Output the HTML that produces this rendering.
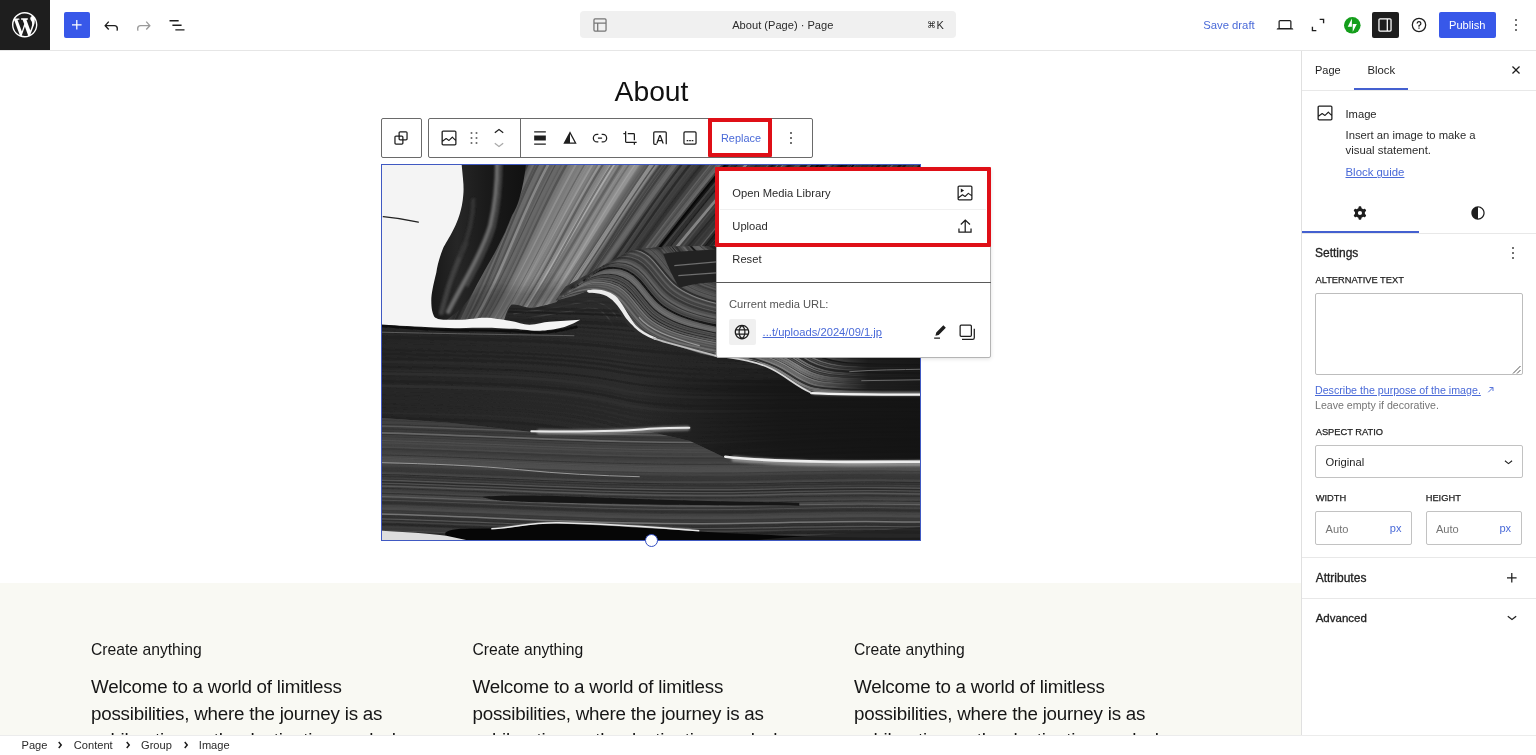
<!DOCTYPE html>
<html lang="en">
<head>
<meta charset="utf-8">
<title>About (Page) - Editor</title>
<style>
*{box-sizing:border-box;margin:0;padding:0}
html,body{width:1536px;height:755px;overflow:hidden;background:#fff;font-family:"Liberation Sans",sans-serif;color:#1e1e1e;font-size:13px}
svg{position:absolute;display:block;overflow:visible}
.ic{fill:#1e1e1e}
#header{position:absolute;left:0;top:0;width:1536px;height:51px;background:#fff;border-bottom:1px solid #e6e6e6}
#wplogo{position:absolute;left:0;top:0;width:50px;height:50px;background:#1e1e1e}
#addbtn{position:absolute;left:63.8px;top:11.7px;width:26.2px;height:26.7px;background:#3858e9;border-radius:2px}
#cmd{position:absolute;left:580.3px;top:11.4px;width:375.5px;height:27px;background:#f0f0f0;border-radius:4px}
#cmd .t{position:absolute;left:-0.3px;width:405.6px;top:0.6px;line-height:26.4px;text-align:center;font-size:11.1px;color:#2b2b2b;white-space:nowrap}
#cmd .k{position:absolute;left:347.2px;top:0.6px;line-height:26px;font-size:9.6px;color:#2b2b2b}
#savedraft{position:absolute;left:1203.2px;top:0;line-height:50px;font-size:11.3px;color:#4a6ad8;white-space:nowrap}
#publish{position:absolute;left:1438.5px;top:11.6px;width:57.4px;height:26.4px;background:#3858e9;border-radius:2px;color:#fff;font-size:11.1px;line-height:26px;text-align:center}
#sbtoggle{position:absolute;left:1372px;top:11.5px;width:26.5px;height:26.5px;background:#1e1e1e;border-radius:2px}
#canvas{position:absolute;left:0;top:0;width:1301px;height:735px;background:#fff;overflow:hidden}
#title{position:absolute;left:1px;width:1301px;top:73.2px;text-align:center;font-size:28.3px;line-height:36px;color:#111;white-space:nowrap}
#cream{position:absolute;left:0;top:583px;width:1301px;height:160px;background:#f9f9f3}
.col{position:absolute;top:0;width:340px;color:#161616}
.col .h{position:absolute;left:0;top:57px;font-size:15.7px;line-height:20px;white-space:nowrap}
.col .p{position:absolute;left:0;top:91.3px;font-size:18.8px;line-height:26.6px;white-space:nowrap;letter-spacing:-0.22px}
#footer{position:absolute;left:0;top:735px;width:1536px;height:20px;background:#fff;border-top:1px solid #ececec;font-size:11.1px;color:#2a2a2a}
#footer span{position:absolute;top:1.3px;line-height:16px;white-space:nowrap}
#sidebar{position:absolute;left:1301px;top:51px;width:235px;height:684px;background:#fff;border-left:1px solid #e0e0e0}
.sb{position:absolute;white-space:nowrap;line-height:16px}
.lbl{font-size:9.3px;letter-spacing:0;color:#222;-webkit-text-stroke:0.25px #222}
.hr{position:absolute;left:0;width:234px;height:1px;background:#e8e8e8}
.box{position:absolute;border:1px solid #bdbdbd;border-radius:2px;background:#fff}
.blue{color:#4a6ad8 !important}
#toolbar1{position:absolute;left:381.3px;top:117.5px;width:41px;height:40px;border:1px solid #6a6a6a;border-radius:2px;background:#fff}
#toolbar2{position:absolute;left:428px;top:117.5px;width:384.5px;height:40px;border:1px solid #6a6a6a;border-radius:2px;background:#fff}
#toolbar2 .div{position:absolute;left:90.5px;top:0;width:1px;height:38px;background:#6a6a6a}
#imgwrap{position:absolute;left:381.2px;top:163.8px;width:540.3px;height:377px;border:1.5px solid #4059c2;background:#262626;overflow:hidden}
#handle{position:absolute;left:644.6px;top:533.9px;width:13.5px;height:13.5px;border-radius:50%;background:#fff;border:1.8px solid #3550c4}
#popover{position:absolute;left:715.5px;top:168px;width:275.3px;height:190px;background:#fff;border:1px solid #b4b4b4;border-radius:2px;box-shadow:0 1px 4px rgba(0,0,0,.12)}
.mi{position:absolute;font-size:11.2px;line-height:16px;color:#2a2a2a;white-space:nowrap}
.red{position:absolute;border:4.5px solid #df0f17;border-radius:1px}
</style>
</head>
<body>
<div id="root" style="will-change:transform;position:absolute;left:0;top:0;width:1536px;height:755px;overflow:hidden">
<div id="canvas">
  <div id="title">About</div>
  <div id="toolbar1">
    <svg style="left:8.6px;top:9.3px" width="20" height="20" viewBox="0 0 24 24"><path class="ic" d="M18 4h-7c-1.100 0-2 .9-2 2v3H6c-1.100 0-2 .9-2 2v7c0 1.100.9 2 2 2h7c1.100 0 2-.9 2-2v-3h3c1.100 0 2-.9 2-2V6c0-1.100-.9-2-2-2zm-4.500 14c0 .3-.2.500-.5.500H6c-.3 0-.5-.2-.5-.5v-7c0-.3.200-.5.500-.5h3V13c0 1.100.9 2 2 2h2.500v3zm0-4.500H11c-.3 0-.5-.2-.5-.5v-2.500H13c.3 0 .5.200.5.500v2.500zm5-.5c0 .3-.2.500-.5.500h-3V11c0-1.100-.9-2-2-2h-2.500V6c0-.3.200-.5.500-.5h7c.3 0 .5.200.5.500v7z"/></svg>
  </div>
  <div id="toolbar2">
    <!-- image -->
    <svg style="left:9.6px;top:9.2px" width="20" height="20" viewBox="0 0 24 24"><path class="ic" d="M19 3H5c-1.100 0-2 .9-2 2v14c0 1.100.9 2 2 2h14c1.100 0 2-.9 2-2V5c0-1.100-.9-2-2-2zM5 4.500h14c.3 0 .5.200.5.500v8.400l-3-2.900c-.3-.3-.8-.3-1 0L11.900 14 9 12c-.3-.2-.6-.2-.8 0l-3.600 2.600V5c-.1-.3.100-.5.400-.5zm14 15H5c-.3 0-.5-.2-.5-.5v-2.400l4.100-3 3 1.900c.3.200.7.200.9-.1L16 12l3.500 3.400V19c0 .3-.2.500-.5.500z"/></svg>
    <!-- drag -->
    <svg style="left:34.8px;top:9.500px" width="20" height="20" viewBox="0 0 24 24"><path fill="#444" d="M8 7h2V5H8v2zm0 6h2v-2H8v2zm0 6h2v-2H8v2zm6-14v2h2V5h-2zm0 8h2v-2h-2v2zm0 6h2v-2h-2v2z"/></svg>
    <!-- movers -->
    <svg style="left:60px;top:3.2px" width="20" height="20" viewBox="0 0 24 24"><path class="ic" d="M6.500 12.400L12 8l5.500 4.400-.9 1.200L12 10l-4.500 3.600-1-1.200z"/></svg>
    <svg style="left:60px;top:15.1px" width="20" height="20" viewBox="0 0 24 24"><path fill="#a8a8a8" d="M17.500 11.600L12 16l-5.500-4.400.9-1.200L12 14l4.500-3.600 1 1.200z"/></svg>
    <div class="div"></div>
    <!-- align -->
    <svg style="left:100.6px;top:9.300px" width="20" height="20" viewBox="0 0 24 24"><path class="ic" d="M19 5.500H5V4h14v1.500ZM19 20H5v-1.500h14V20ZM5 9h14v6H5V9Z"/></svg>
    <!-- duotone -->
    <svg style="left:131.100px;top:9.100px" width="20" height="20" viewBox="0 0 24 24"><path class="ic" d="M12 4 4 19h16L12 4zm0 3.200 5.500 10.300H12V7.200z"/></svg>
    <!-- link -->
    <svg style="left:160.600px;top:9.500px" width="20" height="20" viewBox="0 0 24 24"><path class="ic" d="M10 17.389H8.444A5.194 5.194 0 1 1 8.444 7H10v1.500H8.444a3.694 3.694 0 0 0 0 7.389H10v1.500ZM14 7h1.556a5.194 5.194 0 0 1 0 10.390H14v-1.500h1.556a3.694 3.694 0 0 0 0-7.390H14V7Zm-4.500 6h5v-1.500h-5V13Z"/></svg>
    <!-- crop -->
    <svg style="left:191px;top:9.500px" width="20" height="20" viewBox="0 0 24 24"><path class="ic" d="M18 20v-2h2v-1.500H7.750a.25.25 0 0 1-.25-.250V4H6v2H4v1.500h2v8.750c0 .966.784 1.750 1.750 1.750h8.750v2H18ZM9.273 7.500h6.977a.25.25 0 0 1 .25.250v6.977H18V7.750A1.750 1.750 0 0 0 16.250 6H9.273v1.500Z"/></svg>
    <!-- overlay text -->
    <svg style="left:221px;top:9.300px" width="20" height="20" viewBox="0 0 24 24"><path fill="none" stroke="#1e1e1e" stroke-width="1.5" d="M8 19.500H5.800c-.8 0-1.300-.5-1.300-1.300V5.800c0-.8.500-1.300 1.300-1.300h12.400c.8 0 1.300.5 1.300 1.300v13.700"/><path class="ic" d="M11.100 8.500h1.800l3.700 10h-1.700l-.9-2.600h-4l-.9 2.600H7.400l3.700-10zm-.6 6h3l-1.500-4.300-1.500 4.300z"/></svg>
    <!-- caption -->
    <svg style="left:251px;top:9.300px" width="20" height="20" viewBox="0 0 24 24"><path class="ic" fill-rule="evenodd" d="M6 5.500h12a.5.5 0 0 1 .5.500v12a.5.5 0 0 1-.5.500H6a.5.5 0 0 1-.5-.5V6a.5.5 0 0 1 .5-.5ZM4 6a2 2 0 0 1 2-2h12a2 2 0 0 1 2 2v12a2 2 0 0 1-2 2H6a2 2 0 0 1-2-2V6Zm4 10h2v-1.500H8V16Zm5 0h-2v-1.500h2V16Zm1 0h2v-1.500h-2V16Z"/></svg>
    <div class="blue" style="position:absolute;left:292px;top:11.5px;font-size:10.9px;line-height:16px;white-space:nowrap" id="replace">Replace</div>
    <!-- dots -->
    <svg style="left:352.400px;top:9.500px" width="20" height="20" viewBox="0 0 24 24"><path class="ic" d="M13 19h-2v-2h2v2zm0-6h-2v-2h2v2zm0-6h-2V5h2v2z"/></svg>
  </div>
  <div class="red" style="left:707.8px;top:118px;width:64.1px;height:38.5px"></div>
  <div id="imgwrap">
<svg style="left:0;top:0" width="537.3" height="374.0" viewBox="382.7 165.3 537.3 374.0" preserveAspectRatio="none">
<defs><linearGradient id="gA" gradientUnits="userSpaceOnUse" x1="380" y1="0" x2="925" y2="0"><stop offset="0" stop-color="#242424"/><stop offset=".45" stop-color="#2c2c2c"/><stop offset=".7" stop-color="#1e1e1e"/><stop offset="1" stop-color="#131313"/></linearGradient><linearGradient id="gB" x1="0" y1="0" x2="0" y2="1"><stop offset="0" stop-color="#3a3a3a"/><stop offset=".3" stop-color="#454545"/><stop offset=".7" stop-color="#3c3c3c"/><stop offset="1" stop-color="#2c2c2c"/></linearGradient><linearGradient id="gT" x1="0" y1="0" x2="1" y2="0"><stop offset="0" stop-color="#161616"/><stop offset=".3" stop-color="#262626"/><stop offset=".6" stop-color="#1a1a1a"/><stop offset="1" stop-color="#111"/></linearGradient><filter id="b1" x="-5%" y="-5%" width="110%" height="110%"><feGaussianBlur stdDeviation="0.6"/></filter><filter id="b15" x="-5%" y="-5%" width="110%" height="110%"><feGaussianBlur stdDeviation="0.9"/></filter><filter id="b5" x="-20%" y="-20%" width="140%" height="140%"><feGaussianBlur stdDeviation="6"/></filter><filter id="b04" x="-5%" y="-5%" width="110%" height="110%"><feGaussianBlur stdDeviation="0.4"/></filter><filter id="b2" x="-5%" y="-5%" width="110%" height="110%"><feGaussianBlur stdDeviation="1.2"/></filter><clipPath id="cS"><path d="M462 160H925V246H720L665 247 633 250 600 268 566 289 556 304 530 309 512 307 506 322 480 320 452 323 436 322Z"/></clipPath><clipPath id="cA"><path d="M380 326 504 330 510 308 534 309 575 298 604 297 614 304 628 325 640 336 652 340 702 356 756 363 792 383 810 394 925 396 925 460 813 462 726 458 690 441 650 432 530 432 450 423 380 418Z"/></clipPath><clipPath id="cB"><path d="M380 418 450 423 530 432 650 432 690 441 726 458 813 462 925 460V545H380Z"/></clipPath><linearGradient id="gR2" x1="0" y1="0" x2="1" y2="0"><stop offset="0" stop-color="#151515" stop-opacity="0"/><stop offset=".5" stop-color="#151515" stop-opacity=".85"/><stop offset="1" stop-color="#131313" stop-opacity=".95"/></linearGradient><clipPath id="cR"><path d="M715 352H925V395L812 393.500 792 381 772 369 756 361 715 356Z"/></clipPath><linearGradient id="gR" x1="0" y1="0" x2="1" y2="0"><stop offset="0" stop-color="#161616" stop-opacity="0"/><stop offset=".55" stop-color="#161616" stop-opacity=".9"/><stop offset="1" stop-color="#141414" stop-opacity=".95"/></linearGradient><clipPath id="cW"><path d="M566 287 600 268 633 250 665 247 720 246V358L702 354 652 338 634 326 622 306 607 293 589 291 575 296 556 301Z"/></clipPath></defs>
<rect x="380" y="160" width="545" height="385" fill="url(#gA)"/>
<rect x="380" y="400" width="545" height="130" fill="url(#gB)"/>
<path fill="url(#gA)" d="M380 326 580 331 612 345 642 372 682 392 760 396 925 396 925 460 813 462 726 458 690 441 650 432 530 432 450 423 380 418Z"/>
<g clip-path="url(#cS)"><rect x="440" y="160" width="490" height="240" fill="#606060"/>
<g filter="url(#b2)" fill="none" stroke-linecap="butt">
<path stroke="#414141" stroke-width="11.5" d="M521.9 160C493.8 217.8 478.7 275.5 446.6 335"/>
<path stroke="#303030" stroke-width="12.8" d="M529.2 160C500.4 217.8 483.9 275.5 451.3 335"/>
<path stroke="#6b6b6b" stroke-width="8.3" d="M537.1 160C508.3 217.8 488.4 275.5 456.6 335"/>
<path stroke="#6a6a6a" stroke-width="11.7" d="M547.9 160C515.6 217.8 502.7 275.5 464.7 335"/>
<path stroke="#595959" stroke-width="9.5" d="M553.5 160C524.2 217.8 499.1 275.5 467.8 335"/>
<path stroke="#686868" stroke-width="13.1" d="M561.3 160C529.3 217.8 508.7 275.5 472.9 335"/>
<path stroke="#525252" stroke-width="9.7" d="M570.9 160C537.3 217.8 518 275.5 479.9 335"/>
<path stroke="#7c7c7c" stroke-width="12.2" d="M580.5 160C544.6 217.8 528.6 275.5 486.9 335"/>
<path stroke="#808080" stroke-width="10.4" d="M586.5 160C552.9 217.8 526.9 275.5 490.3 335"/>
<path stroke="#8d8d8d" stroke-width="13.1" d="M596.3 160C561.1 217.8 536.1 275.5 497.4 335"/>
<path stroke="#9d9d9d" stroke-width="10.4" d="M601.9 160C566.6 217.8 538.6 275.5 500.4 335"/>
<path stroke="#7e7e7e" stroke-width="9.6" d="M610.2 160C572.4 217.8 548.6 275.5 506.2 335"/>
<path stroke="#aaaaaa" stroke-width="9.5" d="M618.4 160C580.9 217.8 552.7 275.5 511.7 335"/>
<path stroke="#777777" stroke-width="9.1" d="M626.6 160C589.3 217.8 556.9 275.5 517.3 335"/>
<path stroke="#868686" stroke-width="11.9" d="M636.1 160C596.4 217.8 567.8 275.5 524.2 335"/>
<path stroke="#939393" stroke-width="9.6" d="M642.9 160C602.4 217.8 572.7 275.5 528.4 335"/>
<path stroke="#5b5b5b" stroke-width="10.4" d="M653.6 160C610.7 217.8 584.7 275.5 536.4 335"/>
<path stroke="#8d8d8d" stroke-width="13.9" d="M661.4 160C618.3 217.8 589.5 275.5 541.6 335"/>
<path stroke="#5d5d5d" stroke-width="8.4" d="M667.6 160C625.2 217.8 590.9 275.5 545.2 335"/>
<path stroke="#414141" stroke-width="11.6" d="M675.4 160C630.8 217.8 599.5 275.5 550.3 335"/>
<path stroke="#686868" stroke-width="13.2" d="M684.4 160C639.4 217.8 605.7 275.5 556.7 335"/>
<path stroke="#444444" stroke-width="12.9" d="M691.9 160C647.3 217.8 609.2 275.5 561.7 335"/>
<path stroke="#424242" stroke-width="13.7" d="M700.3 160C654.7 217.8 616.1 275.5 567.4 335"/>
<path stroke="#0f0f0f" stroke-width="8.6" d="M710.3 160C662.2 217.8 627.7 275.5 574.8 335"/>
<path stroke="#444444" stroke-width="12.9" d="M715.9 160C665.5 217.8 634.4 275.5 577.8 335"/>
<path stroke="#626262" stroke-width="12.3" d="M725.7 160C677.1 217.8 637.2 275.5 585 335"/>
<path stroke="#161616" stroke-width="9.7" d="M732.3 160C683 217.8 641.5 275.5 588.9 335"/>
<path stroke="#2d2d2d" stroke-width="9.6" d="M743 160C693 217.8 650.2 275.5 597 335"/>
<path stroke="#454545" stroke-width="8.8" d="M749.7 160C699.4 217.8 654.1 275.5 601.1 335"/>
<path stroke="#4d4d4d" stroke-width="11.9" d="M757.6 160C703.9 217.8 668.5 275.5 608.8 335"/>
<path stroke="#3c3c3c" stroke-width="13.5" d="M766.7 160C714.3 217.8 675.2 275.5 617.9 335"/>
<path stroke="#3c3c3c" stroke-width="11.8" d="M774.9 160C720.9 217.8 686.4 275.5 626.1 335"/>
<path stroke="#141414" stroke-width="11.3" d="M782.3 160C729.3 217.8 692 275.5 633.6 335"/>
<path stroke="#838383" stroke-width="12.2" d="M791.2 160C737.6 217.8 702.3 275.5 642.5 335"/>
<path stroke="#222222" stroke-width="13.2" d="M799.5 160C745.8 217.8 710.7 275.5 650.8 335"/>
<path stroke="#515151" stroke-width="11.4" d="M806.6 160C753.3 217.8 716.7 275.5 657.8 335"/>
<path stroke="#1b1b1b" stroke-width="11.8" d="M815.3 160C763.7 217.8 722.2 275.5 666.6 335"/>
<path stroke="#262626" stroke-width="10.3" d="M824.6 160C771 217.8 735.4 275.5 675.8 335"/>
<path stroke="#0d0d0d" stroke-width="12.5" d="M831.9 160C779.5 217.8 740.4 275.5 683.2 335"/>
<path stroke="#444444" stroke-width="9.4" d="M837.9 160C785.4 217.8 746.6 275.5 689.2 335"/>
<path stroke="#0f0f0f" stroke-width="8.1" d="M848.1 160C796 217.8 755.9 275.5 699.3 335"/>
<path stroke="#131313" stroke-width="9" d="M855 160C802.2 217.8 764.3 275.5 706.3 335"/>
<path stroke="#080808" stroke-width="12" d="M865 160C812.3 217.8 774.1 275.5 716.2 335"/>
<path stroke="#434343" stroke-width="13.5" d="M871 160C819.2 217.8 778.3 275.5 722.2 335"/>
<path stroke="#222222" stroke-width="11" d="M881.2 160C829.6 217.8 788.1 275.5 732.4 335"/>
<path stroke="#282828" stroke-width="13.7" d="M889.2 160C835.7 217.8 799.8 275.5 740.4 335"/>
<path stroke="#212121" stroke-width="10.5" d="M895.6 160C844.9 217.8 800.8 275.5 746.9 335"/>
<path stroke="#363636" stroke-width="13" d="M904.8 160C852.8 217.8 812.6 275.5 756.1 335"/>
<path stroke="#363636" stroke-width="8.2" d="M914 160C862.1 217.8 821.5 275.5 765.3 335"/>
<path stroke="#333333" stroke-width="12.7" d="M921.4 160C869 217.8 829.7 275.5 772.6 335"/>
<path stroke="#2b2b2b" stroke-width="9.4" d="M927.4 160C876.8 217.8 832.3 275.5 778.7 335"/>
<path stroke="#313131" stroke-width="10.7" d="M935.9 160C885.6 217.8 840.1 275.5 787.2 335"/>
</g>
<g filter="url(#b1)" fill="none" stroke-linecap="butt" opacity="0.6">
<path stroke="#434343" stroke-width="1.4" d="M522.4 160C493.9 217.8 480 275.5 447.1 335"/>
<path stroke="#272727" stroke-width="1.9" d="M525.7 160C498.8 217.8 478.7 275.5 449.3 335"/>
<path stroke="#373737" stroke-width="2" d="M530.3 160C502.9 217.8 482.4 275.5 452.6 335"/>
<path stroke="#595959" stroke-width="2.6" d="M533.8 160C503.7 217.8 489.7 275.5 454.8 335"/>
<path stroke="#454545" stroke-width="1.9" d="M538.4 160C510.6 217.8 488.2 275.5 458.3 335"/>
<path stroke="#3c3c3c" stroke-width="2.1" d="M541.4 160C509.9 217.8 497 275.5 460 335"/>
<path stroke="#6e6e6e" stroke-width="1.4" d="M546 160C514.5 217.8 499.8 275.5 463.4 335"/>
<path stroke="#4e4e4e" stroke-width="2.4" d="M549.3 160C517.4 217.8 502.5 275.5 465.5 335"/>
<path stroke="#a5a5a5" stroke-width="2.6" d="M551.6 160C518.9 217.8 504.7 275.5 466.5 335"/>
<path stroke="#5a5a5a" stroke-width="1.7" d="M555.7 160C522.6 217.8 508.1 275.5 469.4 335"/>
<path stroke="#3d3d3d" stroke-width="1.1" d="M558.8 160C527.2 217.8 506.6 275.5 471.3 335"/>
<path stroke="#5d5d5d" stroke-width="1.3" d="M564.8 160C534.3 217.8 508.8 275.5 476.1 335"/>
<path stroke="#797979" stroke-width="2.4" d="M567.2 160C533.4 217.8 516.1 275.5 477.2 335"/>
<path stroke="#7f7f7f" stroke-width="2" d="M572.5 160C538.7 217.8 519.8 275.5 481.3 335"/>
<path stroke="#7d7d7d" stroke-width="2.5" d="M576.7 160C544.8 217.8 518.3 275.5 484.2 335"/>
<path stroke="#9b9b9b" stroke-width="2.1" d="M579.5 160C545.5 217.8 523.9 275.5 485.9 335"/>
<path stroke="#787878" stroke-width="2.7" d="M582.4 160C548.5 217.8 524.8 275.5 487.5 335"/>
<path stroke="#545454" stroke-width="1.4" d="M588.1 160C553.3 217.8 530.9 275.5 492 335"/>
<path stroke="#7f7f7f" stroke-width="2" d="M590.6 160C555.5 217.8 532.4 275.5 493.3 335"/>
<path stroke="#818181" stroke-width="2" d="M594 160C557.3 217.8 537.4 275.5 495.5 335"/>
<path stroke="#6c6c6c" stroke-width="2.8" d="M598.7 160C564.5 217.8 535.4 275.5 498.9 335"/>
<path stroke="#595959" stroke-width="1.9" d="M601.3 160C565 217.8 540.4 275.5 500.3 335"/>
<path stroke="#4a4a4a" stroke-width="2.2" d="M606.7 160C568.4 217.8 548.4 275.5 504.5 335"/>
<path stroke="#8e8e8e" stroke-width="1" d="M610.8 160C575.2 217.8 545.6 275.5 507.4 335"/>
<path stroke="#838383" stroke-width="2.2" d="M612.5 160C576 217.8 547.2 275.5 507.8 335"/>
<path stroke="#4b4b4b" stroke-width="2" d="M616 160C577.1 217.8 554 275.5 510.1 335"/>
<path stroke="#6a6a6a" stroke-width="1.8" d="M620.2 160C583.1 217.8 553.1 275.5 513.1 335"/>
<path stroke="#555555" stroke-width="2.3" d="M624.9 160C587.5 217.8 556.7 275.5 516.5 335"/>
<path stroke="#949494" stroke-width="1.5" d="M629 160C589.7 217.8 562.9 275.5 519.4 335"/>
<path stroke="#5f5f5f" stroke-width="1.6" d="M633.1 160C592.3 217.8 568.5 275.5 522.3 335"/>
<path stroke="#8b8b8b" stroke-width="1.3" d="M635.7 160C594 217.8 571.1 275.5 523.6 335"/>
<path stroke="#a9a9a9" stroke-width="1.2" d="M639.2 160C598 217.8 572.3 275.5 526 335"/>
<path stroke="#757575" stroke-width="2.4" d="M644.8 160C604.4 217.8 574.6 275.5 530.3 335"/>
<path stroke="#616161" stroke-width="2.8" d="M646.2 160C606.2 217.8 573.4 275.5 530.5 335"/>
<path stroke="#3f3f3f" stroke-width="2.4" d="M652.9 160C612.8 217.8 578.6 275.5 535.9 335"/>
<path stroke="#979797" stroke-width="1.1" d="M654.3 160C614 217.8 578.9 275.5 536.2 335"/>
<path stroke="#2e2e2e" stroke-width="1.4" d="M659.2 160C616.8 217.8 586.5 275.5 539.8 335"/>
<path stroke="#5a5a5a" stroke-width="1.2" d="M663.9 160C619.1 217.8 594.2 275.5 543.3 335"/>
<path stroke="#313131" stroke-width="1.9" d="M665.4 160C620.4 217.8 594.6 275.5 543.5 335"/>
<path stroke="#636363" stroke-width="1" d="M670.5 160C627.2 217.8 594.7 275.5 547.5 335"/>
<path stroke="#626262" stroke-width="1.8" d="M674.9 160C629.5 217.8 601.6 275.5 550.6 335"/>
<path stroke="#6d6d6d" stroke-width="1" d="M677.2 160C634.1 217.8 597.7 275.5 551.7 335"/>
<path stroke="#434343" stroke-width="1.8" d="M683.1 160C637.1 217.8 607.9 275.5 556.3 335"/>
<path stroke="#1d1d1d" stroke-width="2.6" d="M686 160C640.8 217.8 607.6 275.5 558 335"/>
<path stroke="#4b4b4b" stroke-width="1.8" d="M688.8 160C641.5 217.8 612.8 275.5 559.6 335"/>
<path stroke="#1d1d1d" stroke-width="2.5" d="M694.5 160C647 217.8 617.5 275.5 564.1 335"/>
<path stroke="#464646" stroke-width="1.9" d="M697.9 160C651.9 217.8 616.3 275.5 566.3 335"/>
<path stroke="#3c3c3c" stroke-width="2.2" d="M699.5 160C653.2 217.8 616.6 275.5 566.6 335"/>
<path stroke="#383838" stroke-width="2.1" d="M703.9 160C654.9 217.8 625 275.5 569.8 335"/>
<path stroke="#2e2e2e" stroke-width="2.3" d="M708.7 160C661.4 217.8 624.5 275.5 573.3 335"/>
<path stroke="#484848" stroke-width="2.5" d="M713 160C663.9 217.8 630.9 275.5 576.4 335"/>
<path stroke="#737373" stroke-width="1.4" d="M715.4 160C667.4 217.8 629.7 275.5 577.7 335"/>
<path stroke="#404040" stroke-width="2" d="M719.6 160C672.3 217.8 630.7 275.5 580.6 335"/>
<path stroke="#797979" stroke-width="2.3" d="M725.2 160C675.6 217.8 639.2 275.5 585 335"/>
<path stroke="#4d4d4d" stroke-width="2.9" d="M728.5 160C680.5 217.8 637.8 275.5 587.1 335"/>
<path stroke="#000000" stroke-width="2" d="M730.4 160C680.4 217.8 642 275.5 587.7 335"/>
<path stroke="#585858" stroke-width="2.2" d="M735.5 160C686.8 217.8 643 275.5 591.6 335"/>
<path stroke="#343434" stroke-width="2.1" d="M738.6 160C688.6 217.8 647.1 275.5 593.5 335"/>
<path stroke="#131313" stroke-width="1.1" d="M742.2 160C690 217.8 653.3 275.5 595.8 335"/>
<path stroke="#404040" stroke-width="2.8" d="M745.6 160C692.9 217.8 656.2 275.5 598 335"/>
<path stroke="#acacac" stroke-width="2.8" d="M751.2 160C700.9 217.8 655.4 275.5 602.4 335"/>
<path stroke="#363636" stroke-width="1.5" d="M754 160C702 217.8 661.7 275.5 605.3 335"/>
<path stroke="#353535" stroke-width="2.6" d="M758.1 160C704.3 217.8 669.4 275.5 609.4 335"/>
<path stroke="#1c1c1c" stroke-width="1.9" d="M762.2 160C711.6 217.8 666.9 275.5 613.4 335"/>
<path stroke="#2b2b2b" stroke-width="2.3" d="M764.8 160C714.5 217.8 669 275.5 616 335"/>
<path stroke="#353535" stroke-width="1.8" d="M769.3 160C718.2 217.8 675.3 275.5 620.6 335"/>
<path stroke="#787878" stroke-width="1.5" d="M774.1 160C721.9 217.8 682.2 275.5 625.4 335"/>
<path stroke="#363636" stroke-width="2.2" d="M775.9 160C722.3 217.8 686.9 275.5 627.2 335"/>
<path stroke="#2a2a2a" stroke-width="2.3" d="M780.5 160C729.3 217.8 686.5 275.5 631.7 335"/>
<path stroke="#000000" stroke-width="3" d="M785.5 160C734.6 217.8 690.8 275.5 636.7 335"/>
<path stroke="#404040" stroke-width="1.9" d="M789.8 160C736.2 217.8 700.6 275.5 641 335"/>
<path stroke="#393939" stroke-width="1.1" d="M792.7 160C742.2 217.8 697.3 275.5 643.9 335"/>
<path stroke="#131313" stroke-width="2" d="M794.9 160C742.1 217.8 704.1 275.5 646.1 335"/>
<path stroke="#2b2b2b" stroke-width="2.7" d="M799.1 160C747.6 217.8 705.6 275.5 650.3 335"/>
<path stroke="#434343" stroke-width="1.4" d="M802.5 160C751.9 217.8 707.2 275.5 653.7 335"/>
<path stroke="#141414" stroke-width="1.7" d="M807.3 160C756.2 217.8 713.2 275.5 658.6 335"/>
<path stroke="#272727" stroke-width="2.8" d="M811.8 160C757.8 217.8 723.6 275.5 663.1 335"/>
<path stroke="#858585" stroke-width="2.8" d="M814.9 160C763.4 217.8 721.7 275.5 666.2 335"/>
<path stroke="#1a1a1a" stroke-width="1.6" d="M817.7 160C767.3 217.8 722.2 275.5 669 335"/>
<path stroke="#010101" stroke-width="2.3" d="M823.6 160C773.2 217.8 728 275.5 674.9 335"/>
<path stroke="#2f2f2f" stroke-width="1.3" d="M825.3 160C774 217.8 731.6 275.5 676.6 335"/>
<path stroke="#0d0d0d" stroke-width="1.2" d="M830 160C777 217.8 739.6 275.5 681.2 335"/>
<path stroke="#6a6a6a" stroke-width="1.9" d="M834.8 160C782.5 217.8 743.2 275.5 686.1 335"/>
<path stroke="#161616" stroke-width="1.8" d="M838.9 160C787.6 217.8 745.2 275.5 690.2 335"/>
<path stroke="#343434" stroke-width="1.7" d="M843.1 160C789.5 217.8 754.1 275.5 694.4 335"/>
<path stroke="#252525" stroke-width="2.1" d="M845.3 160C793.7 217.8 752.2 275.5 696.6 335"/>
<path stroke="#1d1d1d" stroke-width="2.5" d="M850.3 160C798.1 217.8 758.5 275.5 701.6 335"/>
<path stroke="#494949" stroke-width="2" d="M854.4 160C803.2 217.8 760.5 275.5 705.6 335"/>
<path stroke="#585858" stroke-width="1.1" d="M857.2 160C804.8 217.8 765.5 275.5 708.4 335"/>
<path stroke="#5d5d5d" stroke-width="1.2" d="M861 160C807.8 217.8 771.1 275.5 712.2 335"/>
<path stroke="#2b2b2b" stroke-width="2.5" d="M865.4 160C811.7 217.8 776.4 275.5 716.6 335"/>
<path stroke="#1e1e1e" stroke-width="2.5" d="M868.9 160C817.8 217.8 774.7 275.5 720.2 335"/>
<path stroke="#202020" stroke-width="2.3" d="M872.3 160C819.2 217.8 782.3 275.5 723.6 335"/>
<path stroke="#414141" stroke-width="2.4" d="M876.1 160C823.8 217.8 784.2 275.5 727.3 335"/>
<path stroke="#444444" stroke-width="2.6" d="M881.1 160C829.4 217.8 788.2 275.5 732.4 335"/>
<path stroke="#101010" stroke-width="2.3" d="M884.7 160C831.1 217.8 795.6 275.5 735.9 335"/>
<path stroke="#3b3b3b" stroke-width="1.3" d="M887.6 160C834.6 217.8 797.1 275.5 738.8 335"/>
<path stroke="#181818" stroke-width="1.3" d="M892 160C838 217.8 803.8 275.5 743.3 335"/>
<path stroke="#525252" stroke-width="1.6" d="M894.2 160C842.4 217.8 801.5 275.5 745.5 335"/>
<path stroke="#747474" stroke-width="1.4" d="M897.8 160C845.1 217.8 806.8 275.5 749 335"/>
<path stroke="#323232" stroke-width="1.2" d="M901.4 160C849.5 217.8 808.9 275.5 752.7 335"/>
<path stroke="#000000" stroke-width="2.4" d="M905.6 160C854.6 217.8 811.2 275.5 756.8 335"/>
<path stroke="#111111" stroke-width="2.5" d="M910.6 160C859.6 217.8 816.2 275.5 761.9 335"/>
<path stroke="#444444" stroke-width="2" d="M913.6 160C861.3 217.8 821.8 275.5 764.8 335"/>
<path stroke="#454545" stroke-width="2.9" d="M917.2 160C863.6 217.8 828.2 275.5 768.5 335"/>
<path stroke="#565656" stroke-width="2.9" d="M921.7 160C870.7 217.8 827.3 275.5 773 335"/>
<path stroke="#111111" stroke-width="3" d="M926.5 160C874.9 217.8 833.4 275.5 777.7 335"/>
<path stroke="#5c5c5c" stroke-width="1.9" d="M929.9 160C878.8 217.8 835.6 275.5 781.1 335"/>
<path stroke="#000000" stroke-width="1.3" d="M932.8 160C879.5 217.8 843 275.5 784.1 335"/>
<path stroke="#0d0d0d" stroke-width="2" d="M936.5 160C885.3 217.8 842.4 275.5 787.7 335"/>
</g>
<path fill="#1a1a1a" opacity=".28" filter="url(#b5)" d="M440 325 462 296 490 286 530 290 560 282 566 289 556 305 520 310 506 324Z"/>
</g>
<g clip-path="url(#cW)"><rect x="540" y="200" width="200" height="170" fill="#3c3c3c"/>
<g filter="url(#b15)" fill="none">
<path stroke="#636363" stroke-width="6.6" d="M560.1 298.9C585.1 287.9 608.1 289.9 622.1 305.9 S638.1 329.9 660.1 339.9 S715.1 352.9 770.1 365.9"/>
<path stroke="#585858" stroke-width="7.3" d="M563.7 296.2C587.9 284 610.9 286 624.9 302 S640.9 326 662.9 336 S717.9 349 772.9 362"/>
<path stroke="#616161" stroke-width="7.5" d="M567.7 293.3C590.9 279.9 613.9 281.9 627.9 297.9 S643.9 321.9 665.9 331.9 S720.9 344.9 775.9 357.9"/>
<path stroke="#1e1e1e" stroke-width="5.8" d="M571.8 290.3C594 275.6 617 277.6 631 293.6 S647 317.6 669 327.6 S724 340.6 779 353.6"/>
<path stroke="#5f5f5f" stroke-width="6.4" d="M576.3 287C597.5 270.8 620.5 272.8 634.5 288.8 S650.5 312.8 672.5 322.8 S727.5 335.8 782.5 348.8"/>
<path stroke="#747474" stroke-width="6.8" d="M580.5 283.9C600.8 266.4 623.8 268.4 637.8 284.4 S653.8 308.4 675.8 318.4 S730.8 331.4 785.8 344.4"/>
<path stroke="#4a4a4a" stroke-width="6.3" d="M584.5 280.9C603.8 262.2 626.8 264.2 640.8 280.2 S656.8 304.2 678.8 314.2 S733.8 327.2 788.8 340.2"/>
<path stroke="#646464" stroke-width="5.3" d="M588.5 277.9C607 257.9 630 259.9 644 275.9 S660 299.9 682 309.9 S737 322.9 792 335.9"/>
<path stroke="#525252" stroke-width="6.6" d="M592.5 275C610 253.7 633 255.7 647 271.7 S663 295.7 685 305.7 S740 318.7 795 331.7"/>
<path stroke="#3a3a3a" stroke-width="7.5" d="M596 272.4C612.7 250 635.7 252 649.7 268 S665.7 292 687.7 302 S742.7 315 797.7 328"/>
<path stroke="#4a4a4a" stroke-width="5.9" d="M600.1 269.4C615.9 245.7 638.9 247.7 652.9 263.7 S668.9 287.7 690.9 297.7 S745.9 310.7 800.9 323.7"/>
<path stroke="#4f4f4f" stroke-width="7.1" d="M604.3 266.3C619.1 241.3 642.1 243.3 656.1 259.3 S672.1 283.3 694.1 293.3 S749.1 306.3 804.1 319.3"/>
<path stroke="#616161" stroke-width="6.2" d="M608.2 263.4C622.1 237.1 645.1 239.1 659.1 255.1 S675.1 279.1 697.1 289.1 S752.1 302.1 807.1 315.1"/>
<path stroke="#424242" stroke-width="7.9" d="M612.4 260.3C625.3 232.8 648.3 234.8 662.3 250.8 S678.3 274.8 700.3 284.8 S755.3 297.8 810.3 310.8"/>
<path stroke="#454545" stroke-width="6.1" d="M616.7 257.2C628.6 228.2 651.6 230.2 665.6 246.2 S681.6 270.2 703.6 280.2 S758.6 293.2 813.6 306.2"/>
<path stroke="#212121" stroke-width="5.7" d="M620.6 254.3C631.6 224.1 654.6 226.1 668.6 242.1 S684.6 266.1 706.6 276.1 S761.6 289.1 816.6 302.1"/>
<path stroke="#414141" stroke-width="8" d="M624.5 251.4C634.6 219.9 657.6 221.9 671.6 237.9 S687.6 261.9 709.6 271.9 S764.6 284.9 819.6 297.9"/>
<path stroke="#424242" stroke-width="5.6" d="M628.8 248.2C637.9 215.5 660.9 217.5 674.9 233.5 S690.9 257.5 712.9 267.5 S767.9 280.5 822.9 293.5"/>
<path stroke="#3d3d3d" stroke-width="6.6" d="M632.6 245.4C640.9 211.4 663.9 213.4 677.9 229.4 S693.9 253.4 715.9 263.4 S770.9 276.4 825.9 289.4"/>
<path stroke="#646464" stroke-width="6" d="M636.4 242.6C643.8 207.4 666.8 209.4 680.8 225.4 S696.8 249.4 718.8 259.4 S773.8 272.4 828.8 285.4"/>
<path stroke="#393939" stroke-width="5.6" d="M640.5 239.6C646.9 203.1 669.9 205.1 683.9 221.1 S699.9 245.1 721.9 255.1 S776.9 268.1 831.9 281.1"/>
<path stroke="#121212" stroke-width="6" d="M644.8 236.4C650.2 198.6 673.2 200.6 687.2 216.6 S703.2 240.6 725.2 250.6 S780.2 263.6 835.2 276.6"/>
</g>
<g filter="url(#b04)" fill="none" opacity="0.8">
<path stroke="#393939" stroke-width="1.3" d="M560.4 298.7C585.3 287.6 608.3 289.6 622.3 305.6 S638.3 329.6 660.3 339.6 S715.3 352.6 770.3 365.6"/>
<path stroke="#4b4b4b" stroke-width="0.9" d="M561.9 297.6C586.4 286 609.4 288 623.4 304 S639.4 328 661.4 338 S716.4 351 771.4 364"/>
<path stroke="#747474" stroke-width="1.8" d="M562.9 296.8C587.3 284.9 610.3 286.9 624.3 302.9 S640.3 326.9 662.3 336.9 S717.3 349.9 772.3 362.9"/>
<path stroke="#484848" stroke-width="1.4" d="M564.6 295.6C588.5 283.2 611.5 285.2 625.5 301.2 S641.5 325.2 663.5 335.2 S718.5 348.2 773.5 361.2"/>
<path stroke="#4f4f4f" stroke-width="1.1" d="M566.7 294C590.2 280.9 613.2 282.9 627.2 298.9 S643.2 322.9 665.2 332.9 S720.2 345.9 775.2 358.9"/>
<path stroke="#6c6c6c" stroke-width="1" d="M567.8 293.3C591 279.8 614 281.8 628 297.8 S644 321.8 666 331.8 S721 344.8 776 357.8"/>
<path stroke="#838383" stroke-width="1.4" d="M569.6 291.9C592.4 277.9 615.4 279.9 629.4 295.9 S645.4 319.9 667.4 329.9 S722.4 342.9 777.4 355.9"/>
<path stroke="#6b6b6b" stroke-width="1.7" d="M571.3 290.7C593.7 276.1 616.7 278.1 630.7 294.1 S646.7 318.1 668.7 328.1 S723.7 341.1 778.7 354.1"/>
<path stroke="#5e5e5e" stroke-width="1.3" d="M573.1 289.3C595.1 274.2 618.1 276.2 632.1 292.2 S648.1 316.2 670.1 326.2 S725.1 339.2 780.1 352.2"/>
<path stroke="#1f1f1f" stroke-width="0.8" d="M574.4 288.3C596.1 272.8 619.1 274.8 633.1 290.8 S649.1 314.8 671.1 324.8 S726.1 337.8 781.1 350.8"/>
<path stroke="#414141" stroke-width="1.9" d="M576 287.2C597.3 271.1 620.3 273.1 634.3 289.1 S650.3 313.1 672.3 323.1 S727.3 336.1 782.3 349.1"/>
<path stroke="#181818" stroke-width="1.7" d="M577.9 285.8C598.7 269.2 621.7 271.2 635.7 287.2 S651.7 311.2 673.7 321.2 S728.7 334.2 783.7 347.2"/>
<path stroke="#636363" stroke-width="1.7" d="M579 285C599.6 268 622.6 270 636.6 286 S652.6 310 674.6 320 S729.6 333 784.6 346"/>
<path stroke="#646464" stroke-width="1.3" d="M580.6 283.8C600.9 266.2 623.9 268.2 637.9 284.2 S653.9 308.2 675.9 318.2 S730.9 331.2 785.9 344.2"/>
<path stroke="#5c5c5c" stroke-width="1.7" d="M582.6 282.3C602.4 264.2 625.4 266.2 639.4 282.2 S655.4 306.2 677.4 316.2 S732.4 329.2 787.4 342.2"/>
<path stroke="#070707" stroke-width="1.9" d="M583.9 281.4C603.4 262.8 626.4 264.8 640.4 280.8 S656.4 304.8 678.4 314.8 S733.4 327.8 788.4 340.8"/>
<path stroke="#3d3d3d" stroke-width="1.5" d="M586.1 279.7C605.1 260.5 628.1 262.5 642.1 278.5 S658.1 302.5 680.1 312.5 S735.1 325.5 790.1 338.5"/>
<path stroke="#4a4a4a" stroke-width="1.8" d="M587.1 279C605.9 259.4 628.9 261.4 642.9 277.4 S658.9 301.4 680.9 311.4 S735.9 324.4 790.9 337.4"/>
<path stroke="#2d2d2d" stroke-width="2" d="M589.4 277.3C607.6 257 630.6 259 644.6 275 S660.6 299 682.6 309 S737.6 322 792.6 335"/>
<path stroke="#656565" stroke-width="2.1" d="M590.4 276.6C608.4 256 631.4 258 645.4 274 S661.4 298 683.4 308 S738.4 321 793.4 334"/>
<path stroke="#515151" stroke-width="1.1" d="M592.3 275.1C609.9 253.9 632.9 255.9 646.9 271.9 S662.9 295.9 684.9 305.9 S739.9 318.9 794.9 331.9"/>
<path stroke="#343434" stroke-width="1.8" d="M593.9 274C611.1 252.2 634.1 254.2 648.1 270.2 S664.1 294.2 686.1 304.2 S741.1 317.2 796.1 330.2"/>
<path stroke="#606060" stroke-width="1.4" d="M595.3 272.9C612.2 250.7 635.2 252.7 649.2 268.7 S665.2 292.7 687.2 302.7 S742.2 315.7 797.2 328.7"/>
<path stroke="#444444" stroke-width="2.2" d="M596.8 271.9C613.3 249.2 636.3 251.2 650.3 267.2 S666.3 291.2 688.3 301.2 S743.3 314.2 798.3 327.2"/>
<path stroke="#636363" stroke-width="1.6" d="M598.4 270.7C614.5 247.5 637.5 249.5 651.5 265.5 S667.5 289.5 689.5 299.5 S744.5 312.5 799.5 325.5"/>
<path stroke="#3c3c3c" stroke-width="1.2" d="M600.3 269.2C616 245.4 639 247.4 653 263.4 S669 287.4 691 297.4 S746 310.4 801 323.4"/>
<path stroke="#8d8d8d" stroke-width="1.6" d="M602.2 267.8C617.5 243.5 640.5 245.5 654.5 261.5 S670.5 285.5 692.5 295.5 S747.5 308.5 802.5 321.5"/>
<path stroke="#262626" stroke-width="2" d="M603.2 267.1C618.2 242.4 641.2 244.4 655.2 260.4 S671.2 284.4 693.2 294.4 S748.2 307.4 803.2 320.4"/>
<path stroke="#575757" stroke-width="1.6" d="M605 265.8C619.6 240.6 642.6 242.6 656.6 258.6 S672.6 282.6 694.6 292.6 S749.6 305.6 804.6 318.6"/>
<path stroke="#3f3f3f" stroke-width="1.1" d="M607 264.3C621.2 238.4 644.2 240.4 658.2 256.4 S674.2 280.4 696.2 290.4 S751.2 303.4 806.2 316.4"/>
<path stroke="#4e4e4e" stroke-width="1.1" d="M608.4 263.3C622.2 237 645.2 239 659.2 255 S675.2 279 697.2 289 S752.2 302 807.2 315"/>
<path stroke="#4b4b4b" stroke-width="2.1" d="M610.4 261.8C623.7 234.9 646.7 236.9 660.7 252.9 S676.7 276.9 698.7 286.9 S753.7 299.9 808.7 312.9"/>
<path stroke="#3c3c3c" stroke-width="1.8" d="M611.7 260.8C624.8 233.5 647.8 235.5 661.8 251.5 S677.8 275.5 699.8 285.5 S754.8 298.5 809.8 311.5"/>
<path stroke="#5e5e5e" stroke-width="1.6" d="M613.1 259.8C625.8 232 648.8 234 662.8 250 S678.8 274 700.8 284 S755.8 297 810.8 310"/>
<path stroke="#555555" stroke-width="1.5" d="M615.1 258.4C627.3 229.9 650.3 231.9 664.3 247.9 S680.3 271.9 702.3 281.9 S757.3 294.9 812.3 307.9"/>
<path stroke="#484848" stroke-width="1.3" d="M616.1 257.6C628.2 228.8 651.2 230.8 665.2 246.8 S681.2 270.8 703.2 280.8 S758.2 293.8 813.2 306.8"/>
<path stroke="#525252" stroke-width="1.2" d="M618.1 256.1C629.7 226.7 652.7 228.7 666.7 244.7 S682.7 268.7 704.7 278.7 S759.7 291.7 814.7 304.7"/>
<path stroke="#5c5c5c" stroke-width="1.3" d="M619.7 254.9C630.9 225 653.9 227 667.9 243 S683.9 267 705.9 277 S760.9 290 815.9 303"/>
<path stroke="#646464" stroke-width="1" d="M621.4 253.7C632.2 223.3 655.2 225.3 669.2 241.3 S685.2 265.3 707.2 275.3 S762.2 288.3 817.2 301.3"/>
<path stroke="#292929" stroke-width="1.6" d="M623.2 252.3C633.6 221.3 656.6 223.3 670.6 239.3 S686.6 263.3 708.6 273.3 S763.6 286.3 818.6 299.3"/>
<path stroke="#434343" stroke-width="1.8" d="M624.5 251.4C634.6 220 657.6 222 671.6 238 S687.6 262 709.6 272 S764.6 285 819.6 298"/>
<path stroke="#535353" stroke-width="1.9" d="M626.3 250.1C636 218.1 659 220.1 673 236.1 S689 260.1 711 270.1 S766 283.1 821 296.1"/>
<path stroke="#6c6c6c" stroke-width="2" d="M627.7 249C637.1 216.6 660.1 218.6 674.1 234.6 S690.1 258.6 712.1 268.6 S767.1 281.6 822.1 294.6"/>
<path stroke="#404040" stroke-width="1.4" d="M629.2 247.9C638.3 215 661.3 217 675.3 233 S691.3 257 713.3 267 S768.3 280 823.3 293"/>
<path stroke="#575757" stroke-width="1.5" d="M631 246.6C639.6 213.1 662.6 215.1 676.6 231.1 S692.6 255.1 714.6 265.1 S769.6 278.1 824.6 291.1"/>
<path stroke="#0f0f0f" stroke-width="2.1" d="M632.5 245.5C640.8 211.6 663.8 213.6 677.8 229.6 S693.8 253.6 715.8 263.6 S770.8 276.6 825.8 289.6"/>
<path stroke="#616161" stroke-width="2.1" d="M634 244.4C641.9 210 664.9 212 678.9 228 S694.9 252 716.9 262 S771.9 275 826.9 288"/>
<path stroke="#656565" stroke-width="1.6" d="M636 242.9C643.4 207.9 666.4 209.9 680.4 225.9 S696.4 249.9 718.4 259.9 S773.4 272.9 828.4 285.9"/>
<path stroke="#353535" stroke-width="0.9" d="M637.6 241.7C644.7 206.2 667.7 208.2 681.7 224.2 S697.7 248.2 719.7 258.2 S774.7 271.2 829.7 284.2"/>
<path stroke="#5a5a5a" stroke-width="1.4" d="M638.7 240.9C645.5 205 668.5 207 682.5 223 S698.5 247 720.5 257 S775.5 270 830.5 283"/>
<path stroke="#383838" stroke-width="1.8" d="M640.6 239.5C647 203 670 205 684 221 S700 245 722 255 S777 268 832 281"/>
<path stroke="#1f1f1f" stroke-width="1.1" d="M642.2 238.3C648.3 201.3 671.3 203.3 685.3 219.3 S701.3 243.3 723.3 253.3 S778.3 266.3 833.3 279.3"/>
<path stroke="#303030" stroke-width="0.9" d="M643.7 237.2C649.4 199.8 672.4 201.8 686.4 217.8 S702.4 241.8 724.4 251.8 S779.4 264.8 834.4 277.8"/>
<path stroke="#464646" stroke-width="2.2" d="M645.8 235.7C651 197.6 674 199.6 688 215.6 S704 239.6 726 249.6 S781 262.6 836 275.6"/>
<path stroke="#656565" stroke-width="1.9" d="M647.2 234.6C652.1 196.1 675.1 198.1 689.1 214.1 S705.1 238.1 727.1 248.1 S782.1 261.1 837.1 274.1"/>
</g>
<path fill="none" stroke="#262626" stroke-width="3.5" opacity=".75" filter="url(#b2)" d="M560 296C575 284 600 268 630 251 640 247 652 247 664 248"/>
<path filter="url(#b1)" fill="#232323" d="M664 254C684 251 702 250 720 250V282C702 283 690 285 680 288 674 278 668 266 664 254Z"/>
<path fill="none" stroke="#6e6e6e" stroke-width="1.2" d="M675 266 720 262M679 276 720 273"/>
</g>
<path fill="url(#gA)" d="M504 324C506 316 508 309 512 305 520 304 526 309 534 308 546 306 556 303 575 297 590 294 604 296 612 302 622 312 628 324 640 335L640 350 504 350Z"/>
<path fill="none" stroke="#3c3c3c" stroke-width="1.5" filter="url(#b1)" d="M514 314C535 311 560 308 585 302 600 300 610 306 618 318M520 320C545 315 570 312 590 308 602 308 608 316 614 326"/>
<g clip-path="url(#cR)"><rect x="700" y="340" width="230" height="60" fill="#2a2a2a"/><g filter="url(#b04)" fill="none">
<path stroke="#6d6d6d" stroke-width="1.5" d="M690 350C735 357 765 363 786 377 S806 391.5 845 393.5 L925 394"/>
<path stroke="#7e7e7e" stroke-width="2.5" d="M691.7 348.6C736.7 355.5 766.4 361.5 787.4 375.5 S808.7 389.9 849.2 391.8 L925 392.3"/>
<path stroke="#333333" stroke-width="1.3" d="M693.4 347.3C738.4 353.9 767.7 359.9 788.7 373.9 S811.4 388.3 853.5 390.1 L925 390.6"/>
<path stroke="#7d7d7d" stroke-width="2" d="M695.1 345.9C740.1 352.4 769.1 358.4 790.1 372.4 S814.2 386.7 857.8 388.4 L925 388.9"/>
<path stroke="#6a6a6a" stroke-width="2.5" d="M696.8 344.6C741.8 350.9 770.4 356.9 791.4 370.9 S816.9 385 862 386.7 L925 387.2"/>
<path stroke="#888888" stroke-width="1.6" d="M698.5 343.2C743.5 349.4 771.8 355.4 792.8 369.4 S819.6 383.4 866.2 385 L925 385.5"/>
<path stroke="#727272" stroke-width="1.7" d="M700.2 341.8C745.2 347.8 773.2 353.8 794.2 367.8 S822.3 381.8 870.5 383.3 L925 383.8"/>
<path stroke="#7a7a7a" stroke-width="2.3" d="M701.9 340.5C746.9 346.3 774.5 352.3 795.5 366.3 S825 380.2 874.8 381.6 L925 382.1"/>
<path stroke="#828282" stroke-width="1.8" d="M703.6 339.1C748.6 344.8 775.9 350.8 796.9 364.8 S827.8 378.6 879 379.9 L925 380.4"/>
<path stroke="#555555" stroke-width="1.3" d="M705.3 337.8C750.3 343.2 777.2 349.2 798.2 363.2 S830.5 377 883.2 378.2 L925 378.7"/>
<path stroke="#838383" stroke-width="1.2" d="M707 336.4C752 341.7 778.6 347.7 799.6 361.7 S833.2 375.4 887.5 376.5 L925 377"/>
<path stroke="#777777" stroke-width="1.9" d="M708.7 335C753.7 340.2 780 346.2 801 360.2 S835.9 373.7 891.8 374.8 L925 375.3"/>
<path stroke="#2d2d2d" stroke-width="2.5" d="M710.4 333.7C755.4 338.6 781.3 344.6 802.3 358.6 S838.6 372.1 896 373.1 L925 373.6"/>
<path stroke="#7d7d7d" stroke-width="1.5" d="M712.1 332.3C757.1 337.1 782.7 343.1 803.7 357.1 S841.4 370.5 900.2 371.4 L925 371.9"/>
<path stroke="#595959" stroke-width="1.6" d="M713.8 331C758.8 335.6 784 341.6 805 355.6 S844.1 368.9 904.5 369.7 L925 370.2"/>
<path stroke="#8b8b8b" stroke-width="1.5" d="M715.5 329.6C760.5 334.1 785.4 340.1 806.4 354.1 S846.8 367.3 908.8 368 L925 368.5"/>
<path stroke="#3e3e3e" stroke-width="2.4" d="M717.2 328.2C762.2 332.5 786.8 338.5 807.8 352.5 S849.5 365.7 913 366.3 L925 366.8"/>
<path stroke="#1b1b1b" stroke-width="1.4" d="M718.9 326.9C763.9 331 788.1 337 809.1 351 S852.2 364 917.2 364.6 L925 365.1"/>
<path stroke="#6a6a6a" stroke-width="2.4" d="M720.6 325.5C765.6 329.5 789.5 335.5 810.5 349.5 S855 362.4 921.5 362.9 L925 363.4"/>
<path stroke="#626262" stroke-width="2.1" d="M722.3 324.2C767.3 327.9 790.8 333.9 811.8 347.9 S857.7 360.8 925.8 361.2 L925 361.7"/>
<path stroke="#4d4d4d" stroke-width="1.5" d="M724 322.8C769 326.4 792.2 332.4 813.2 346.4 S860.4 359.2 930 359.5 L925 360"/>
<path stroke="#515151" stroke-width="1.3" d="M725.7 321.4C770.7 324.9 793.6 330.9 814.6 344.9 S863.1 357.6 934.2 357.8 L925 358.3"/>
<path stroke="#1b1b1b" stroke-width="2.2" d="M727.4 320.1C772.4 323.3 794.9 329.3 815.9 343.3 S865.8 356 938.5 356.1 L925 356.6"/>
<path stroke="#303030" stroke-width="2.4" d="M729.1 318.7C774.1 321.8 796.3 327.8 817.3 341.8 S868.6 354.4 942.8 354.4 L925 354.9"/>
</g><rect x="800" y="340" width="125" height="60" fill="url(#gR)"/></g>
<path fill="none" stroke="#6a6a6a" stroke-width="1" filter="url(#b04)" d="M850 372C875 370 900 370 925 369.500M862 381 925 380"/>
<path fill="url(#gT)" d="M460 160H527C526 172 524 186 520 199 518 206 516 210 513 215 510 222 508 227 506 232 503 238 500 244 497 250 494 256 491 261 488 266 484 273 481 279 478 284 475 290 472 295 469 300 465 305 462 309 458 312L449 319 443 324 432 318 428 300 434 270 444 246 456 226 462 205 464 185Z"/>
<g filter="url(#b2)" fill="none" stroke-linecap="round">
<path stroke="#6a6a6a" stroke-width="4.5" d="M498 160C498 185 496 205 491 226 485 246 474 266 464 284 458 295 453 304 449 312"/>
<path stroke="#444" stroke-width="2.5" d="M502 160C502 185 500 207 495 228 489 248 478 268 468 286"/>
<path stroke="#414141" stroke-width="5" d="M466 244C460 258 454 272 449 288 446 298 444 306 442 313"/>
<path stroke="#343434" stroke-width="4" d="M474 200C474 222 468 240 461 256"/>
</g>
<g clip-path="url(#cA)"><g filter="url(#b1)" fill="none">
<path stroke="#323232" stroke-width="1.8" d="M380 286.4C480 288.4 560 289.4 620 289.2S760 308.4 925 310.4" opacity="0.8"/>
<path stroke="#2d2d2d" stroke-width="1.7" d="M380 290.4C480 292.4 560 293.4 620 293.8S760 312.4 925 314.4" opacity="0.8"/>
<path stroke="#242424" stroke-width="2.1" d="M380 293.4C480 295.4 560 296.4 620 297.4S760 315.4 925 317.4" opacity="0.8"/>
<path stroke="#282828" stroke-width="2" d="M380 298.4C480 300.4 560 301.4 620 303S760 320.4 925 322.4" opacity="0.8"/>
<path stroke="#2a2a2a" stroke-width="3.1" d="M380 302.3C480 304.3 560 305.3 620 307.5S760 324.3 925 326.3" opacity="0.8"/>
<path stroke="#202020" stroke-width="2.7" d="M380 305.7C480 307.7 560 308.7 620 311.5S760 327.7 925 329.7" opacity="0.8"/>
<path stroke="#1c1c1c" stroke-width="2.1" d="M380 309.5C480 311.5 560 312.5 620 315.9S760 331.5 925 333.5" opacity="0.8"/>
<path stroke="#242424" stroke-width="2.8" d="M380 314.9C480 316.9 560 317.9 620 321.9S760 336.9 925 338.9" opacity="0.8"/>
<path stroke="#222222" stroke-width="3.5" d="M380 317.2C480 319.2 560 320.2 620 324.8S760 339.2 925 341.2" opacity="0.8"/>
<path stroke="#1f1f1f" stroke-width="1.6" d="M380 321.9C480 323.9 560 324.9 620 330.1S760 343.9 925 345.9" opacity="0.8"/>
<path stroke="#252525" stroke-width="2.1" d="M380 326.2C480 328.2 560 329.2 620 335S760 348.2 925 350.2" opacity="0.8"/>
<path stroke="#272727" stroke-width="2.1" d="M380 329.5C480 331.5 560 332.5 620 338.9S760 351.5 925 353.5" opacity="0.8"/>
<path stroke="#242424" stroke-width="2" d="M380 334.5C480 336.5 560 337.5 620 344.5S760 356.5 925 358.5" opacity="0.8"/>
<path stroke="#232323" stroke-width="3.3" d="M380 337.6C480 339.6 560 340.6 620 348.2S760 359.6 925 361.6" opacity="0.8"/>
<path stroke="#252525" stroke-width="1.6" d="M380 343C480 345 560 346 620 354.2S760 365 925 367" opacity="0.8"/>
<path stroke="#272727" stroke-width="3.4" d="M380 345.9C480 347.9 560 348.9 620 357.7S760 367.9 925 369.9" opacity="0.8"/>
<path stroke="#212121" stroke-width="1.9" d="M380 350C480 352 560 353 620 362.4S760 372 925 374" opacity="0.8"/>
<path stroke="#232323" stroke-width="2.8" d="M380 354.1C480 356.1 560 357.1 620 367.1S760 376.1 925 378.1" opacity="0.8"/>
<path stroke="#222222" stroke-width="2.5" d="M380 358.6C480 360.6 560 361.6 620 372.2S760 380.6 925 382.6" opacity="0.8"/>
<path stroke="#2c2c2c" stroke-width="2.5" d="M380 362C480 364 560 365 620 376.2S760 384 925 386" opacity="0.8"/>
<path stroke="#1f1f1f" stroke-width="1.8" d="M380 366.9C480 368.9 560 369.9 620 381.7S760 388.9 925 390.9" opacity="0.8"/>
<path stroke="#2b2b2b" stroke-width="2" d="M380 370.6C480 372.6 560 373.6 620 386S760 392.6 925 394.6" opacity="0.8"/>
<path stroke="#2e2e2e" stroke-width="3" d="M380 373.9C480 375.9 560 376.9 620 389.9S760 395.9 925 397.9" opacity="0.8"/>
<path stroke="#282828" stroke-width="2.5" d="M380 378.6C480 380.6 560 381.6 620 395.2S760 400.6 925 402.6" opacity="0.8"/>
<path stroke="#222222" stroke-width="2.7" d="M380 381.4C480 383.4 560 384.4 620 398.6S760 403.4 925 405.4" opacity="0.8"/>
<path stroke="#2e2e2e" stroke-width="2.9" d="M380 386C480 388 560 389 620 403.8S760 408 925 410" opacity="0.8"/>
<path stroke="#282828" stroke-width="3.2" d="M380 390.1C480 392.1 560 393.1 620 408.5S760 412.1 925 414.1" opacity="0.8"/>
<path stroke="#272727" stroke-width="2.5" d="M380 393.4C480 395.4 560 396.4 620 412.4S760 415.4 925 417.4" opacity="0.8"/>
<path stroke="#272727" stroke-width="2.4" d="M380 397.9C480 399.9 560 400.9 620 417.5S760 419.9 925 421.9" opacity="0.8"/>
<path stroke="#272727" stroke-width="3.3" d="M380 401.5C480 403.5 560 404.5 620 421.7S760 423.5 925 425.5" opacity="0.8"/>
<path stroke="#242424" stroke-width="2.6" d="M380 406.1C480 408.1 560 409.1 620 426.9S760 428.1 925 430.1" opacity="0.8"/>
<path stroke="#272727" stroke-width="2.1" d="M380 410.6C480 412.6 560 413.6 620 432S760 432.6 925 434.6" opacity="0.8"/>
<path stroke="#2a2a2a" stroke-width="2.1" d="M380 413.1C480 415.1 560 416.1 620 435.1S760 435.1 925 437.1" opacity="0.8"/>
<path stroke="#222222" stroke-width="2.7" d="M380 418.2C480 420.2 560 421.2 620 440.8S760 440.2 925 442.2" opacity="0.8"/>
<path stroke="#262626" stroke-width="3.1" d="M380 421.2C480 423.2 560 424.2 620 444.4S760 443.2 925 445.2" opacity="0.8"/>
<path stroke="#262626" stroke-width="2.9" d="M380 425.3C480 427.3 560 428.3 620 449.1S760 447.3 925 449.3" opacity="0.8"/>
<path stroke="#2a2a2a" stroke-width="3.1" d="M380 430.7C480 432.7 560 433.7 620 455.1S760 452.7 925 454.7" opacity="0.8"/>
<path stroke="#222222" stroke-width="1.9" d="M380 433.1C480 435.1 560 436.1 620 458.1S760 455.1 925 457.1" opacity="0.8"/>
<path stroke="#5c5c5c" stroke-width="1" d="M382 332.500C450 334 520 335 575 336"/>
</g><rect x="640" y="380" width="290" height="90" fill="url(#gR2)"/></g>
<g clip-path="url(#cB)">
<g filter="url(#b15)" fill="none">
<path stroke="#424242" stroke-width="7" d="M380 416.9C500 419.9 620 428.9 760 425.9S860 424.9 925 424.9"/>
<path stroke="#434343" stroke-width="8" d="M380 423.1C500 426.1 620 435.1 760 432.1S860 431.1 925 431.1"/>
<path stroke="#3a3a3a" stroke-width="8.6" d="M380 428.3C500 431.3 620 440.3 760 437.3S860 436.3 925 436.3"/>
<path stroke="#313131" stroke-width="5.3" d="M380 435.1C500 438.1 620 447.1 760 444.1S860 443.1 925 443.1"/>
<path stroke="#424242" stroke-width="8.1" d="M380 441.5C500 444.5 620 453.5 760 450.5S860 449.5 925 449.5"/>
<path stroke="#3c3c3c" stroke-width="6" d="M380 449.5C500 452.5 620 461.5 760 458.5S860 457.5 925 457.5"/>
<path stroke="#464646" stroke-width="6.5" d="M380 455.5C500 458.5 620 467.5 760 464.5S860 463.5 925 463.5"/>
<path stroke="#4f4f4f" stroke-width="6.6" d="M380 461.9C500 464.9 620 473.9 760 470.9S860 469.9 925 469.9"/>
<path stroke="#383838" stroke-width="6.4" d="M380 469.1C500 472.1 620 481.1 760 478.1S860 477.1 925 477.1"/>
<path stroke="#484848" stroke-width="6.9" d="M380 475.8C500 478.8 620 487.8 760 484.8S860 483.8 925 483.8"/>
<path stroke="#2b2b2b" stroke-width="6.5" d="M380 481.8C500 484.8 620 493.8 760 490.8S860 489.8 925 489.8"/>
<path stroke="#3d3d3d" stroke-width="7.2" d="M380 489.2C500 492.2 620 501.2 760 498.2S860 497.2 925 497.2"/>
<path stroke="#484848" stroke-width="5.9" d="M380 494.5C500 497.5 620 506.5 760 503.5S860 502.5 925 502.5"/>
<path stroke="#353535" stroke-width="7.7" d="M380 501.7C500 504.7 620 513.7 760 510.7S860 509.7 925 509.7"/>
<path stroke="#4a4a4a" stroke-width="6.5" d="M380 509.1C500 512.1 620 521.1 760 518.1S860 517.1 925 517.1"/>
<path stroke="#353535" stroke-width="5.1" d="M380 514.1C500 517.1 620 526.1 760 523.1S860 522.1 925 522.1"/>
<path stroke="#2d2d2d" stroke-width="6.6" d="M380 521C500 524 620 533 760 530S860 529 925 529"/>
<path stroke="#383838" stroke-width="5.6" d="M380 529C500 532 620 541 760 538S860 537 925 537"/>
</g>
<g filter="url(#b04)" fill="none" opacity="0.85">
<path stroke="#2b2b2b" stroke-width="1.7" d="M380 416.9C500 419.9 620 428.9 760 425.9S860 424.9 925 424.9"/>
<path stroke="#3e3e3e" stroke-width="1.3" d="M380 419.2C500 422.2 620 431.2 760 428.2S860 427.2 925 427.2"/>
<path stroke="#383838" stroke-width="1.2" d="M380 420.8C500 423.8 620 432.8 760 429.8S860 428.8 925 428.8"/>
<path stroke="#343434" stroke-width="1.1" d="M380 424.9C500 427.9 620 436.9 760 433.9S860 432.9 925 432.9"/>
<path stroke="#5c5c5c" stroke-width="1.5" d="M380 426.3C500 429.3 620 438.3 760 435.3S860 434.3 925 434.3"/>
<path stroke="#323232" stroke-width="1" d="M380 429.1C500 432.1 620 441.1 760 438.1S860 437.1 925 437.1"/>
<path stroke="#707070" stroke-width="1.7" d="M380 433.2C500 436.2 620 445.2 760 442.2S860 441.2 925 441.2"/>
<path stroke="#434343" stroke-width="1.7" d="M380 435.9C500 438.9 620 447.9 760 444.9S860 443.9 925 443.9"/>
<path stroke="#454545" stroke-width="1.8" d="M380 438.2C500 441.2 620 450.2 760 447.2S860 446.2 925 446.2"/>
<path stroke="#585858" stroke-width="0.8" d="M380 440.7C500 443.7 620 452.7 760 449.7S860 448.7 925 448.7"/>
<path stroke="#4c4c4c" stroke-width="1.5" d="M380 443C500 446 620 455 760 452S860 451 925 451"/>
<path stroke="#4b4b4b" stroke-width="1.9" d="M380 447.4C500 450.4 620 459.4 760 456.4S860 455.4 925 455.4"/>
<path stroke="#383838" stroke-width="1.6" d="M380 449C500 452 620 461 760 458S860 457 925 457"/>
<path stroke="#444444" stroke-width="0.9" d="M380 453.3C500 456.3 620 465.3 760 462.3S860 461.3 925 461.3"/>
<path stroke="#303030" stroke-width="0.9" d="M380 455.1C500 458.1 620 467.1 760 464.1S860 463.1 925 463.1"/>
<path stroke="#515151" stroke-width="1" d="M380 457.8C500 460.8 620 469.8 760 466.8S860 465.8 925 465.8"/>
<path stroke="#4f4f4f" stroke-width="1" d="M380 460.6C500 463.6 620 472.6 760 469.6S860 468.6 925 468.6"/>
<path stroke="#3b3b3b" stroke-width="1.3" d="M380 463.9C500 466.9 620 475.9 760 472.9S860 471.9 925 471.9"/>
<path stroke="#434343" stroke-width="1.6" d="M380 465.7C500 468.7 620 477.7 760 474.7S860 473.7 925 473.7"/>
<path stroke="#393939" stroke-width="1.2" d="M380 469.3C500 472.3 620 481.3 760 478.3S860 477.3 925 477.3"/>
<path stroke="#363636" stroke-width="0.9" d="M380 471.1C500 474.1 620 483.1 760 480.1S860 479.1 925 479.1"/>
<path stroke="#272727" stroke-width="1.1" d="M380 474.8C500 477.8 620 486.8 760 483.8S860 482.8 925 482.8"/>
<path stroke="#2f2f2f" stroke-width="1.9" d="M380 476.6C500 479.6 620 488.6 760 485.6S860 484.6 925 484.6"/>
<path stroke="#5a5a5a" stroke-width="1.4" d="M380 480.5C500 483.5 620 492.5 760 489.5S860 488.5 925 488.5"/>
<path stroke="#585858" stroke-width="1.2" d="M380 483.4C500 486.4 620 495.4 760 492.4S860 491.4 925 491.4"/>
<path stroke="#5b5b5b" stroke-width="1.5" d="M380 486.2C500 489.2 620 498.2 760 495.2S860 494.2 925 494.2"/>
<path stroke="#2e2e2e" stroke-width="1.1" d="M380 488.6C500 491.6 620 500.6 760 497.6S860 496.6 925 496.6"/>
<path stroke="#494949" stroke-width="0.8" d="M380 492.3C500 495.3 620 504.3 760 501.3S860 500.3 925 500.3"/>
<path stroke="#2d2d2d" stroke-width="1.2" d="M380 493.7C500 496.7 620 505.7 760 502.7S860 501.7 925 501.7"/>
<path stroke="#686868" stroke-width="1.1" d="M380 496.9C500 499.9 620 508.9 760 505.9S860 504.9 925 504.9"/>
<path stroke="#5b5b5b" stroke-width="0.8" d="M380 500.4C500 503.4 620 512.4 760 509.4S860 508.4 925 508.4"/>
<path stroke="#2f2f2f" stroke-width="1.6" d="M380 502.9C500 505.9 620 514.9 760 511.9S860 510.9 925 510.9"/>
<path stroke="#444444" stroke-width="1.5" d="M380 505.7C500 508.7 620 517.7 760 514.7S860 513.7 925 513.7"/>
<path stroke="#4c4c4c" stroke-width="1.9" d="M380 509.1C500 512.1 620 521.1 760 518.1S860 517.1 925 517.1"/>
<path stroke="#373737" stroke-width="1.6" d="M380 510.8C500 513.8 620 522.8 760 519.8S860 518.8 925 518.8"/>
<path stroke="#818181" stroke-width="1.5" d="M380 514.4C500 517.4 620 526.4 760 523.4S860 522.4 925 522.4"/>
<path stroke="#323232" stroke-width="1.2" d="M380 516.8C500 519.8 620 528.8 760 525.8S860 524.8 925 524.8"/>
<path stroke="#5c5c5c" stroke-width="1.1" d="M380 519.2C500 522.2 620 531.2 760 528.2S860 527.2 925 527.2"/>
<path stroke="#444444" stroke-width="1.4" d="M380 522C500 525 620 534 760 531S860 530 925 530"/>
<path stroke="#252525" stroke-width="1.6" d="M380 524.5C500 527.5 620 536.5 760 533.5S860 532.5 925 532.5"/>
<path stroke="#3d3d3d" stroke-width="1.7" d="M380 527.2C500 530.2 620 539.2 760 536.2S860 535.2 925 535.2"/>
<path stroke="#4f4f4f" stroke-width="0.9" d="M380 530.8C500 533.8 620 542.8 760 539.8S860 538.8 925 538.8"/>
</g>
</g>
<path fill="#f4f4f4" d="M380 160H462C463 175 465 185 464 195 463 210 458 222 455 228 449 240 446 244 444 248 440 258 438 266 437 273 434 285 432 294 432 301 432 309 433 313 435 317 439 321 447 320 459 320 470 320 478 318 485 318 495 318 502 320 510 321 518 322 524 325 530 325 538 325 544 322 550 322 560 321 570 321 581 320 572 325 565 328 555 329.500 545 331 540 331 535 331 525 330 518 329 510 329 495 328 488 328 480 328 470 328 462 328.500 455 328.500 440 328 420 327 400 326L380 324.500Z"/>
<path fill="none" stroke="#0e0e0e" stroke-width="2.600" filter="url(#b1)" d="M382 326C410 328.500 440 330.500 470 330.500 500 330.500 520 332 540 333 555 332.500 565 330 578 327"/>
<path fill="none" stroke="#222" stroke-width="1.3" stroke-linecap="round" d="M384 217C395 218 408 220 419 222.500"/>
<path fill="#161616" filter="url(#b1)" d="M483 497C520 494 580 497 660 500 700 501 740 502 800 503L800 506C740 506 640 505 560 503 520 502 495 502 483 497Z"/>
<g fill="none" stroke-linecap="round" filter="url(#b2)" opacity=".55">
<path stroke="#bdbdbd" stroke-width="5" d="M540 432C570 432.500 620 432 650 430 668 429 680 428.500 688 428.500"/>
<path stroke="#c8c8c8" stroke-width="6" d="M735 459C760 461.500 790 463 830 463.500 870 464 900 463.500 921 463.500"/>
<path stroke="#bbb" stroke-width="4" d="M815 393C840 394 880 394 921 394"/>
<path stroke="#aaa" stroke-width="4" d="M500 530C520 528 532 524 560 524.500 600 525.500 650 528 690 531"/>
</g>
<g fill="none" stroke-linecap="round" filter="url(#b1)">
<path stroke="#e8e8e8" stroke-width="2" d="M532 431.500C570 432 620 432 650 429 670 428 685 428 690 428"/>
<path stroke="#9a9a9a" stroke-width="1" d="M382 463C430 464 480 466 520 470 560 474 600 476 640 477"/>
<path stroke="#ededed" stroke-width="2.600" d="M726 457C750 460 790 461.500 830 462 870 462.500 900 462 921 462"/>
<path stroke="#f2f2f2" stroke-width="2.200" d="M812 393.500C840 395 880 395 921 395"/>
<path stroke="#e9e9e9" stroke-width="2.400" d="M589 291.500C600 291 608 293 614 298 624 307 628 318 636 327 642 333 648 336 656 339"/>
<path stroke="#bdbdbd" stroke-width="1.800" d="M654 338.500C660 340.500 664 342 668 343 690 349 705 353 716 356"/>
<path fill="#ececec" stroke="none" d="M592 290C602 289 612 292 618 298 626 308 630 318 637 327 633 326 629 322 625 316 619 306 613 298 604 295 599 293.500 595 293 589 293Z"/>
<path stroke="#d8d8d8" stroke-width="1.800" d="M716 356C740 359 758 362 772 369 788 377 796 386 812 393"/>
<path stroke="#999" stroke-width="1.200" d="M640 318C650 330 668 337 700 346"/>
</g>
<path fill="#060606" d="M446 541L446 533C452 528 470 529 500 529 520 528 530 523 560 524 600 525 660 529 720 533 780 536 840 538 925 538V545H446Z"/>
<path fill="none" stroke="#e6e6e6" stroke-width="1.500" filter="url(#b1)" d="M492 529C515 528 530 522.500 560 523 600 524 650 527 700 531"/>
<path fill="#dedede" d="M380 531C400 532 430 534 447 536L470 541H380Z"/>
<path fill="#222" d="M925 527V545H700C780 538 860 533 925 527Z" opacity=".8"/>
</svg>
  </div>
  <div id="handle"></div>
  <div id="cream">
    <div class="col" style="left:91px"><div class="h">Create anything</div><div class="p">Welcome to a world of limitless<br>possibilities, where the journey is as<br>exhilarating as the destination, and where</div></div>
    <div class="col" style="left:472.5px"><div class="h">Create anything</div><div class="p">Welcome to a world of limitless<br>possibilities, where the journey is as<br>exhilarating as the destination, and where</div></div>
    <div class="col" style="left:854px"><div class="h">Create anything</div><div class="p">Welcome to a world of limitless<br>possibilities, where the journey is as<br>exhilarating as the destination, and where</div></div>
  </div>
  <div id="popover"></div>
  <!-- popover contents in page coordinates -->
  <div id="pc" style="position:absolute;left:0;top:0">
    <div class="mi" id="oml" style="left:732.3px;top:184.800px">Open Media Library</div>
    <div style="position:absolute;left:720px;top:208.500px;width:266px;height:1px;background:#f0f0f0"></div>
    <div class="mi" style="left:732.3px;top:218px">Upload</div>
    <div class="mi" style="left:732.3px;top:251px">Reset</div>
    <div style="position:absolute;left:716px;top:282px;width:274.500px;height:1px;background:#5a5a5a"></div>
    <div class="mi" id="cmu" style="left:729px;top:296px;color:#555">Current media URL:</div>
    <div style="position:absolute;left:728.8px;top:318.600px;width:27px;height:26px;background:#f0f0f0;border-radius:2px"></div>
    <!-- globe -->
    <svg style="left:732.3px;top:321.800px" width="20" height="20" viewBox="0 0 24 24"><path class="ic" d="M12 3.300c-4.800 0-8.800 3.900-8.800 8.800 0 4.800 3.900 8.800 8.800 8.800 4.800 0 8.800-3.900 8.800-8.800s-4-8.800-8.800-8.800zm6.500 5.500h-2.600C15.400 7.300 14.800 6 14 5c2 .6 3.600 2 4.500 3.800zm.7 3.200c0 .6-.1 1.200-.2 1.800h-2.900c.1-.6.100-1.200.100-1.800s-.1-1.200-.1-1.800H19c.2.600.2 1.200.2 1.800zM12 18.700c-1-.7-1.800-1.900-2.300-3.500h4.600c-.5 1.600-1.300 2.900-2.300 3.500zm-2.600-4.900c-.1-.6-.1-1.100-.1-1.800 0-.6.100-1.200.100-1.800h5.200c.1.600.1 1.100.100 1.800s-.1 1.200-.1 1.800H9.400zM4.800 12c0-.6.100-1.200.200-1.800h2.900c-.1.600-.1 1.200-.1 1.800 0 .6.100 1.200.100 1.800H5c-.2-.6-.2-1.200-.2-1.800zM12 5.300c1 .7 1.800 1.900 2.300 3.500H9.700c.5-1.600 1.300-2.900 2.300-3.500zM10 5c-.8 1-1.400 2.300-1.800 3.800H5.500C6.400 7 8 5.600 10 5zM5.500 15.300h2.600c.4 1.500 1 2.800 1.800 3.700-1.800-.6-3.500-2-4.400-3.700zM14 19c.8-1 1.400-2.200 1.800-3.700h2.600C17.600 17 16 18.400 14 19z"/></svg>
    <div class="mi blue" id="url" style="left:762.6px;top:324.300px;text-decoration:underline">...t/uploads/2024/09/1.jp</div>
    <!-- pencil -->
    <svg style="left:929.600px;top:322.300px" width="20" height="20" viewBox="0 0 24 24"><path class="ic" d="m19 7-3-3-8.500 8.500-1 4 4-1L19 7Zm-7 11.500H5V20h7v-1.500Z"/></svg>
    <!-- copy -->
    <svg style="left:956.500px;top:321.800px" width="20" height="20" viewBox="0 0 24 24"><path class="ic" fill-rule="evenodd" d="M5 4.500h11a.5.5 0 0 1 .5.500v11a.5.5 0 0 1-.5.500H5a.5.5 0 0 1-.5-.5V5a.5.5 0 0 1 .5-.5ZM3 5a2 2 0 0 1 2-2h11a2 2 0 0 1 2 2v11a2 2 0 0 1-2 2H5a2 2 0 0 1-2-2V5Zm17 3v10.750c0 .690-.560 1.250-1.250 1.250H6v1.500h12.750a2.750 2.750 0 0 0 2.750-2.750V8H20Z"/></svg>
    <!-- media library icon -->
    <svg style="left:954.800px;top:182.500px" width="20" height="20" viewBox="0 0 24 24"><path class="ic" d="m7 6.500 4 2.500-4 2.500z"/><path class="ic" fill-rule="evenodd" d="m5 3c-1.100 0-2 .9-2 2v14c0 1.100.9 2 2 2h14c1.100 0 2-.9 2-2V5c0-1.100-.9-2-2-2zm0 1.500h14c.3 0 .5.200.5.500v9.100l-3.100-2.200c-.3-.2-.7-.2-.9.100L12 15.300l-2.600-1.700c-.3-.2-.6-.2-.9 0l-4 2.800V5c0-.3.200-.5.500-.5zm14 15H5c-.3 0-.5-.2-.5-.5v-.8l4.500-3.100 2.700 1.700c.3.200.7.100.9-.1l3.500-3.400 3.400 2.400V19c0 .3-.2.500-.5.500z"/></svg>
    <!-- upload icon -->
    <svg style="left:955.100px;top:216px" width="20" height="20" viewBox="0 0 24 24"><path class="ic" d="M18.500 15v3.500H13V6.700l4.500 4.100 1-1.100-6.200-5.800-5.800 5.800 1 1.100 4-4v11.700h-6V15H4v5h16v-5z"/></svg>
  </div>
  <div class="red" style="left:714.8px;top:167.4px;width:276.2px;height:79.5px"></div>
</div>
<div id="sidebar">
  <!-- coordinates inside sidebar: page x-1302, page y-51 -->
  <div class="sb" id="tabpage" style="left:13px;top:10.9px;font-size:11px">Page</div>
  <div class="sb" id="tabblock" style="left:65.500px;top:10.9px;font-size:11.3px">Block</div>
  <div style="position:absolute;left:51.8px;top:37.2px;width:54.500px;height:2.200px;background:#4460d0"></div>
  <div class="hr" style="top:39px"></div>
  <!-- close -->
  <svg style="left:204px;top:9.300px" width="20" height="20" viewBox="0 0 24 24"><path class="ic" d="M12 13.060l3.712 3.713 1.061-1.060L13.061 12l3.712-3.712-1.060-1.060L12 10.938 8.288 7.227l-1.061 1.060L10.939 12l-3.712 3.712 1.060 1.061L12 13.061z"/></svg>
  <!-- image icon -->
  <svg style="left:13.300px;top:52.300px" width="20" height="20" viewBox="0 0 24 24"><path class="ic" d="M19 3H5c-1.100 0-2 .9-2 2v14c0 1.100.9 2 2 2h14c1.100 0 2-.9 2-2V5c0-1.100-.9-2-2-2zM5 4.500h14c.3 0 .5.200.5.500v8.400l-3-2.900c-.3-.3-.8-.3-1 0L11.900 14 9 12c-.3-.2-.6-.2-.8 0l-3.600 2.600V5c-.1-.3.100-.5.400-.5zm14 15H5c-.3 0-.5-.2-.5-.5v-2.400l4.100-3 3 1.900c.3.200.7.200.9-.1L16 12l3.500 3.400V19c0 .3-.2.500-.5.500z"/></svg>
  <div class="sb" id="sbimage" style="left:43.500px;top:55px;font-size:11.2px">Image</div>
  <div class="sb" id="sbdesc1" style="left:43.500px;top:75.800px;font-size:11.25px;color:#2a2a2a">Insert an image to make a</div>
  <div class="sb" id="sbdesc2" style="left:43.500px;top:91px;font-size:11.4px;color:#2a2a2a">visual statement.</div>
  <div class="sb blue" id="sbguide" style="left:43.500px;top:113.400px;font-size:11.4px;text-decoration:underline">Block guide</div>
  <!-- cog -->
  <svg style="left:48.400px;top:152.400px" width="20" height="20" viewBox="0 0 24 24"><path class="ic" fill-rule="evenodd" d="M10.289 4.836A1 1 0 0111.275 4h1.306a1 1 0 01.987.836l.244 1.466c.787.260 1.503.679 2.108 1.218l1.393-.522a1 1 0 011.216.437l.653 1.130a1 1 0 01-.230 1.273l-1.148.944a6.025 6.025 0 010 2.435l1.149.946a1 1 0 01.230 1.272l-.653 1.130a1 1 0 01-1.216.437l-1.394-.522c-.605.540-1.320.958-2.108 1.218l-.244 1.466a1 1 0 01-.987.836h-1.306a1 1 0 01-.986-.836l-.244-1.466a5.995 5.995 0 01-2.108-1.218l-1.394.522a1 1 0 01-1.217-.436l-.653-1.131a1 1 0 01.230-1.272l1.149-.946a6.026 6.026 0 010-2.435l-1.148-.944a1 1 0 01-.230-1.272l.653-1.131a1 1 0 011.217-.437l1.393.522a5.994 5.994 0 012.108-1.218l.244-1.466zM14.429 12a2.500 2.500 0 11-5 0 2.500 2.500 0 015 0z"/></svg>
  <!-- styles -->
  <svg style="left:165.700px;top:152.400px" width="20" height="20" viewBox="0 0 24 24"><path class="ic" fill-rule="evenodd" d="M12 4c-4.400 0-8 3.600-8 8s3.600 8 8 8 8-3.600 8-8-3.600-8-8-8zm0 14.500V5.500c3.600 0 6.500 2.900 6.500 6.500s-2.900 6.500-6.500 6.500z"/></svg>
  <div style="position:absolute;left:0;top:180.200px;width:117px;height:2.200px;background:#4460d0"></div>
  <div class="hr" style="top:182px"></div>
  <div class="sb" id="sbsettings" style="left:13px;top:194.300px;font-size:12px;-webkit-text-stroke:0.3px #222;color:#222">Settings</div>
  <svg style="left:200.700px;top:191.800px" width="20" height="20" viewBox="0 0 24 24"><path class="ic" d="M13 19h-2v-2h2v2zm0-6h-2v-2h2v2zm0-6h-2V5h2v2z"/></svg>
  <div class="sb lbl" id="lblalt" style="left:13.500px;top:220.500px">ALTERNATIVE TEXT</div>
  <div class="box" style="left:13px;top:241.800px;width:207.500px;height:82.500px"></div>
  <svg style="left:209px;top:313px" width="10" height="10" viewBox="0 0 10 10"><path fill="none" stroke="#555" stroke-width="1" d="M2 9.500 9.500 2M6 9.500 9.500 6"/></svg>
  <div class="sb blue" id="sbdescribe" style="left:13px;top:330.700px;font-size:10.67px;text-decoration:underline">Describe the purpose of the image.</div>
  <svg style="left:184.500px;top:335px" width="7.500" height="7.500" viewBox="0 0 9 9"><path fill="none" stroke="#4a6ad8" stroke-width="1.100" d="M1.500 7.500 7 2M3 1.800h4.200V6"/></svg>
  <div class="sb" id="sbleave" style="left:13px;top:346.400px;font-size:10.62px;color:#757575">Leave empty if decorative.</div>
  <div class="sb lbl" id="lblaspect" style="left:13.700px;top:372.600px">ASPECT RATIO</div>
  <div class="box" style="left:13px;top:394px;width:207.500px;height:33px;border-color:#c2c2c2"></div>
  <div class="sb" id="sboriginal" style="left:23.600px;top:402.800px;font-size:11.2px">Original</div>
  <svg style="left:197.800px;top:401.500px" width="17" height="17" viewBox="0 0 24 24"><path class="ic" d="M17.500 11.600L12 16l-5.500-4.400.9-1.200L12 14l4.500-3.600 1 1.200z"/></svg>
  <div class="sb lbl" id="lblwidth" style="left:13.700px;top:439px">WIDTH</div>
  <div class="sb lbl" id="lblheight" style="left:123.700px;top:439px">HEIGHT</div>
  <div class="box" style="left:13px;top:460px;width:97px;height:33.500px;border-color:#c2c2c2"></div>
  <div class="box" style="left:123.700px;top:460px;width:96.800px;height:33.500px;border-color:#c2c2c2"></div>
  <div class="sb" style="left:23.600px;top:469.600px;font-size:11.1px;color:#757575">Auto</div>
  <div class="sb blue" style="left:87.800px;top:468.600px;font-size:11.05px">px</div>
  <div class="sb" style="left:133.900px;top:469.600px;font-size:11.1px;color:#757575">Auto</div>
  <div class="sb blue" style="left:197.400px;top:468.600px;font-size:11.05px">px</div>
  <div class="hr" style="top:506px"></div>
  <div class="sb" id="sbattr" style="left:13.7px;top:518.800px;font-size:12px;-webkit-text-stroke:0.3px #222;color:#222">Attributes</div>
  <svg style="left:200px;top:517px" width="20" height="20" viewBox="0 0 24 24"><path class="ic" d="M11 12.500V17.500H12.500V12.500H17.500V11H12.500V6H11V11H6V12.500H11Z"/></svg>
  <div class="hr" style="top:546.500px"></div>
  <div class="sb" id="sbadv" style="left:13.7px;top:558.600px;font-size:11.5px;-webkit-text-stroke:0.3px #222;color:#222">Advanced</div>
  <svg style="left:200px;top:555.600px" width="20" height="20" viewBox="0 0 24 24"><path class="ic" d="M17.500 11.600L12 16l-5.500-4.400.9-1.200L12 14l4.500-3.600 1 1.200z"/></svg>
</div>
<div id="header">
  <div id="wplogo">
    <svg style="left:12.3px;top:12.3px" width="25.4" height="25.4" viewBox="0 0 20 20"><path fill="#fff" d="M20 10c0-5.510-4.490-10-10-10C4.480 0 0 4.490 0 10c0 5.520 4.480 10 10 10 5.510 0 10-4.480 10-10zM7.780 15.370L4.370 6.220c.550-.020 1.170-.080 1.170-.080.500-.060.440-1.130-.060-1.110 0 0-1.450.110-2.370.110-.180 0-.370 0-.580-.010C4.120 2.690 6.870 1.110 10 1.110c2.330 0 4.450.870 6.050 2.340-.680-.110-1.650.390-1.650 1.580 0 .740.450 1.360.900 2.100.350.610.550 1.360.550 2.460 0 1.490-1.400 5-1.400 5l-3.030-8.370c.540-.020.820-.170.820-.170.500-.050.440-1.250-.060-1.220 0 0-1.440.120-2.380.120-.870 0-2.330-.120-2.330-.120-.500-.030-.560 1.200-.060 1.220l.920.080 1.260 3.410zM17.410 10c.240-.640.740-1.870.430-4.250.700 1.290 1.050 2.710 1.050 4.250 0 3.290-1.730 6.240-4.400 7.780.970-2.590 1.940-5.200 2.920-7.780zM6.100 18.090C3.120 16.650 1.110 13.530 1.110 10c0-1.300.230-2.480.720-3.590C3.250 10.300 4.670 14.200 6.100 18.090zm4.030-6.630l2.580 6.980c-.860.290-1.760.450-2.710.450-.790 0-1.570-.110-2.290-.330.810-2.380 1.620-4.740 2.420-7.100z"/></svg>
  </div>
  <div id="addbtn"><svg style="left:3.1px;top:3.4px" width="20" height="20" viewBox="0 0 24 24"><path fill="#fff" d="M11 12.500V17.500H12.500V12.500H17.500V11H12.500V6H11V11H6V12.500H11Z"/></svg></div>
  <!-- undo -->
  <svg style="left:100.5px;top:15.5px" width="20" height="20" viewBox="0 0 24 24"><path fill="none" stroke="#1e1e1e" stroke-width="1.6" d="M9.300 6.800 5 11.600l4.300 4.600M5.600 11.600H16c2.300 0 3.600 1.600 3.600 3.600 0 1-.2 1.700-.6 2.400"/></svg>
  <!-- redo -->
  <svg style="left:133.500px;top:15.5px" width="20" height="20" viewBox="0 0 24 24"><path fill="none" stroke="#9a9a9a" stroke-width="1.6" d="M14.700 6.800 19 11.600l-4.300 4.600M18.400 11.600H8c-2.300 0-3.600 1.600-3.600 3.600 0 1 .2 1.700.6 2.400"/></svg>
  <!-- list view -->
  <svg style="left:167px;top:15px" width="20" height="20" viewBox="0 0 24 24"><path class="ic" d="M3 6h11v1.700H3V6Zm3.500 5.500h11v1.700h-11v-1.700ZM21 17H10v1.700h11V17Z"/></svg>
  <div id="cmd">
    <svg style="left:9.7px;top:3.5px" width="20" height="20" viewBox="0 0 24 24"><path fill="#757575" fill-rule="evenodd" d="M18 5.500H6a.5.5 0 00-.5.500v3h13V6a.5.5 0 00-.5-.5zm.5 5H10v8h8a.5.5 0 00.5-.5v-7.500zm-10 0h-3V18a.5.5 0 00.5.5h2.500v-8zM6 4h12a2 2 0 012 2v12a2 2 0 01-2 2H6a2 2 0 01-2-2V6a2 2 0 012-2z"/></svg>
    <div class="t">About (Page) · Page</div><div class="k"><span style="font-size:9.3px;position:relative;top:-0.5px">⌘</span><span style="font-size:11px">K</span></div>
  </div>
  <div id="savedraft">Save draft</div>
  <!-- laptop -->
  <svg style="left:1275.3px;top:15.2px" width="20" height="20" viewBox="0 0 24 24"><path class="ic" d="M20.500 16h-.7V8c0-1.100-.9-2-2-2H6.200c-1.100 0-2 .9-2 2v8h-.7c-.8 0-1.500.7-1.500 1.500h20c0-.8-.7-1.500-1.500-1.500zM5.700 8c0-.3.200-.5.500-.5h11.600c.3 0 .5.200.5.500v7.600H5.700V8z"/></svg>
  <!-- fullscreen -->
  <svg style="left:1308.4px;top:15.2px" width="20" height="20" viewBox="0 0 24 24"><path fill="none" stroke="#1e1e1e" stroke-width="1.6" d="M14 5.300h4.700V10M10 18.700H5.300V14"/></svg>
  <!-- jetpack -->
  <svg style="left:1343.7px;top:16.5px" width="16.6" height="16.6" viewBox="0 0 24 24"><circle cx="12" cy="12" r="12" fill="#149e1b"/><path fill="#fff" d="M11.400 14H5.400L11.400 2.300V14zM12.600 21.700V10h6L12.600 21.700z"/></svg>
  <div id="sbtoggle"><svg style="left:3.2px;top:3.2px" width="20" height="20" viewBox="0 0 24 24"><path fill="#fff" d="M18 4H6c-1.100 0-2 .9-2 2v12c0 1.100.9 2 2 2h12c1.100 0 2-.9 2-2V6c0-1.100-.9-2-2-2zm-4 14.500H6c-.3 0-.5-.2-.5-.5V6c0-.3.200-.5.500-.5h8v13zm4.500-.5c0 .3-.2.500-.5.500h-2.500v-13H18c.3 0 .5.200.5.500v12z"/></svg></div>
  <!-- help -->
  <svg style="left:1408.7px;top:15px" width="20" height="20" viewBox="0 0 24 24"><path class="ic" fill-rule="evenodd" d="M12 4.750a7.250 7.250 0 100 14.500 7.250 7.250 0 000-14.500zM3.250 12a8.750 8.750 0 1117.500 0 8.750 8.750 0 01-17.500 0zM12 8.750a1.500 1.500 0 01.167 2.990c-.465.052-.917.440-.917 1.010V14h1.500v-.845A3 3 0 109 10.250h1.500a1.500 1.500 0 011.500-1.500zM11.250 15v1.500h1.500V15h-1.500z"/></svg>
  <div id="publish">Publish</div>
  <svg style="left:1505.6px;top:15.2px" width="20" height="20" viewBox="0 0 24 24"><path class="ic" d="M13 19h-2v-2h2v2zm0-6h-2v-2h2v2zm0-6h-2V5h2v2z"/></svg>
</div>
<div id="footer">
  <span id="bc1" style="left:21.500px">Page</span>
  <svg style="left:55.300px;top:4px" width="10" height="10" viewBox="0 0 24 24"><path class="ic" d="M10.400 3.800 7.600 6.100 12.500 12l-4.900 5.900 2.800 2.300 6.800-8.200z"/></svg>
  <span id="bc2" style="left:73.800px">Content</span>
  <svg style="left:122.800px;top:4px" width="10" height="10" viewBox="0 0 24 24"><path class="ic" d="M10.400 3.800 7.600 6.100 12.500 12l-4.900 5.900 2.800 2.300 6.800-8.200z"/></svg>
  <span id="bc3" style="left:141px">Group</span>
  <svg style="left:180.500px;top:4px" width="10" height="10" viewBox="0 0 24 24"><path class="ic" d="M10.400 3.800 7.600 6.100 12.500 12l-4.900 5.900 2.800 2.300 6.800-8.200z"/></svg>
  <span id="bc4" style="left:198.800px">Image</span>
</div>
</div>
</body>
</html>
